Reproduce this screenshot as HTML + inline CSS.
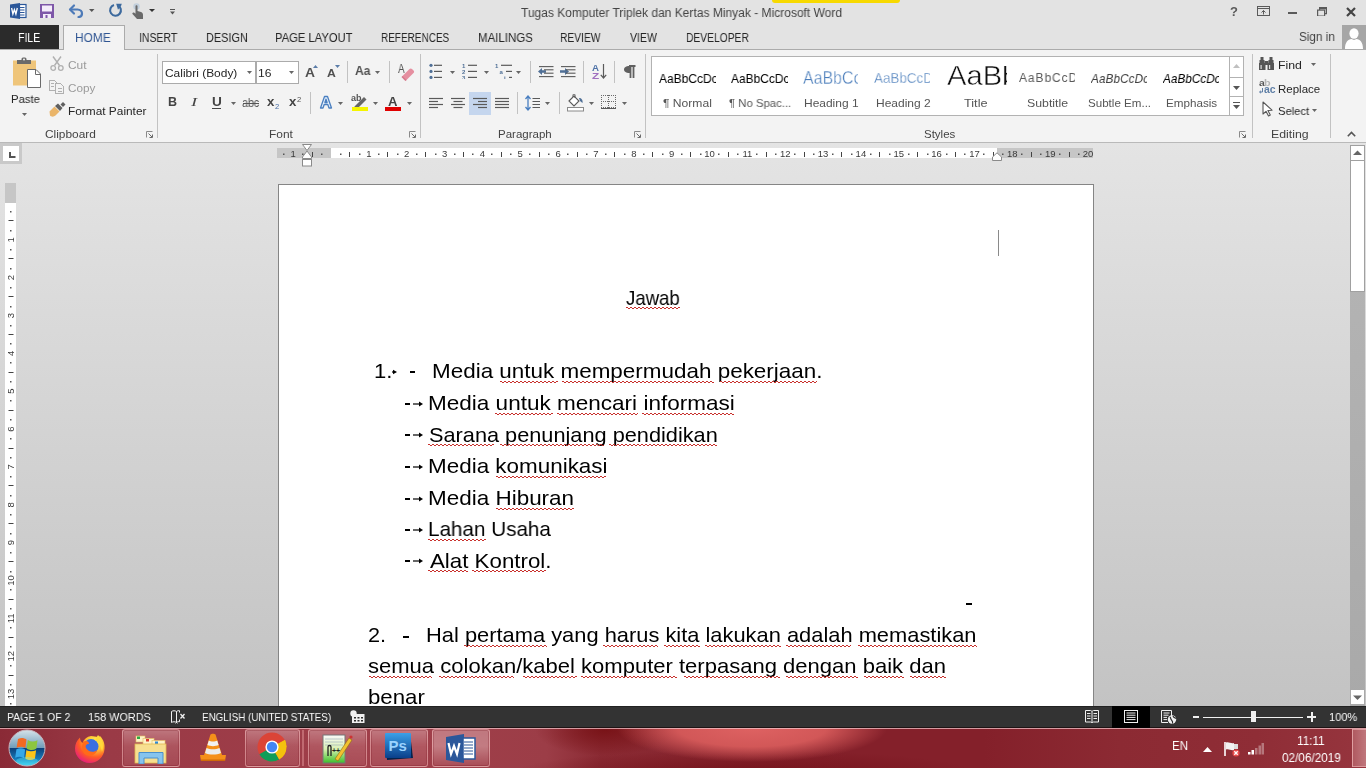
<!DOCTYPE html><html><head><meta charset="utf-8"><style>
*{margin:0;padding:0;box-sizing:border-box}
html,body{width:1366px;height:768px;overflow:hidden;position:relative;background:#e3e3e3;font-family:"Liberation Sans",sans-serif}
.t{position:absolute;white-space:pre;line-height:1em;transform-origin:0 0;will-change:transform}
.r{position:absolute;display:block}
</style></head><body><div class="r" style="left:0px;top:143px;width:1366px;height:563px;background:linear-gradient(#e4e4e4, #c3c3c3);"></div>
<div class="r" style="left:278px;top:184px;width:816px;height:530px;background:#fff;border:1px solid #858585;border-bottom:none"></div>
<div class="r" style="left:998px;top:230px;width:1px;height:26px;background:#8a8a8a;"></div>
<div id="t1" class="t" style="left:625.81px;top:286.82px;font-size:21.00px;color:#000;font-family:'Liberation Sans', sans-serif;font-weight:normal;font-style:normal;transform:scaleX(0.8858);">Jawab</div>
<svg class="r" style="left:626px;top:307px;shape-rendering:crispEdges" width="54" height="2" viewBox="0 0 54 2"><g fill="#c8302c"><rect x="0" y="0" width="2" height="1"/><rect x="2" y="1" width="2" height="1"/><rect x="4" y="0" width="2" height="1"/><rect x="6" y="1" width="2" height="1"/><rect x="8" y="0" width="2" height="1"/><rect x="10" y="1" width="2" height="1"/><rect x="12" y="0" width="2" height="1"/><rect x="14" y="1" width="2" height="1"/><rect x="16" y="0" width="2" height="1"/><rect x="18" y="1" width="2" height="1"/><rect x="20" y="0" width="2" height="1"/><rect x="22" y="1" width="2" height="1"/><rect x="24" y="0" width="2" height="1"/><rect x="26" y="1" width="2" height="1"/><rect x="28" y="0" width="2" height="1"/><rect x="30" y="1" width="2" height="1"/><rect x="32" y="0" width="2" height="1"/><rect x="34" y="1" width="2" height="1"/><rect x="36" y="0" width="2" height="1"/><rect x="38" y="1" width="2" height="1"/><rect x="40" y="0" width="2" height="1"/><rect x="42" y="1" width="2" height="1"/><rect x="44" y="0" width="2" height="1"/><rect x="46" y="1" width="2" height="1"/><rect x="48" y="0" width="2" height="1"/><rect x="50" y="1" width="2" height="1"/><rect x="52" y="0" width="2" height="1"/></g></svg>
<div id="t2" class="t" style="left:374.12px;top:360.02px;font-size:21.00px;color:#000;font-family:'Liberation Sans', sans-serif;font-weight:normal;font-style:normal;transform:scaleX(1.0501);">1.</div>
<svg class="r" style="left:392px;top:369px;" width="7" height="6" viewBox="0 0 7 6"><path d="M0 3 H3.0" stroke="#000" stroke-width="1.2"/><path d="M1.0 0.8 L5.0 3 L1.0 5.2 Z" fill="#000"/></svg>
<div class="r" style="left:409.8px;top:371px;width:5.2px;height:2px;background:#000;"></div>
<div id="t3" class="t" style="left:432.26px;top:360.02px;font-size:21.00px;color:#000;font-family:'Liberation Sans', sans-serif;font-weight:normal;font-style:normal;transform:scaleX(1.0687);">Media untuk mempermudah pekerjaan.</div>
<svg class="r" style="left:500px;top:381px;shape-rendering:crispEdges" width="58" height="2" viewBox="0 0 58 2"><g fill="#c8302c"><rect x="0" y="0" width="2" height="1"/><rect x="2" y="1" width="2" height="1"/><rect x="4" y="0" width="2" height="1"/><rect x="6" y="1" width="2" height="1"/><rect x="8" y="0" width="2" height="1"/><rect x="10" y="1" width="2" height="1"/><rect x="12" y="0" width="2" height="1"/><rect x="14" y="1" width="2" height="1"/><rect x="16" y="0" width="2" height="1"/><rect x="18" y="1" width="2" height="1"/><rect x="20" y="0" width="2" height="1"/><rect x="22" y="1" width="2" height="1"/><rect x="24" y="0" width="2" height="1"/><rect x="26" y="1" width="2" height="1"/><rect x="28" y="0" width="2" height="1"/><rect x="30" y="1" width="2" height="1"/><rect x="32" y="0" width="2" height="1"/><rect x="34" y="1" width="2" height="1"/><rect x="36" y="0" width="2" height="1"/><rect x="38" y="1" width="2" height="1"/><rect x="40" y="0" width="2" height="1"/><rect x="42" y="1" width="2" height="1"/><rect x="44" y="0" width="2" height="1"/><rect x="46" y="1" width="2" height="1"/><rect x="48" y="0" width="2" height="1"/><rect x="50" y="1" width="2" height="1"/><rect x="52" y="0" width="2" height="1"/><rect x="54" y="1" width="2" height="1"/><rect x="56" y="0" width="2" height="1"/></g></svg>
<svg class="r" style="left:562px;top:381px;shape-rendering:crispEdges" width="152" height="2" viewBox="0 0 152 2"><g fill="#c8302c"><rect x="0" y="0" width="2" height="1"/><rect x="2" y="1" width="2" height="1"/><rect x="4" y="0" width="2" height="1"/><rect x="6" y="1" width="2" height="1"/><rect x="8" y="0" width="2" height="1"/><rect x="10" y="1" width="2" height="1"/><rect x="12" y="0" width="2" height="1"/><rect x="14" y="1" width="2" height="1"/><rect x="16" y="0" width="2" height="1"/><rect x="18" y="1" width="2" height="1"/><rect x="20" y="0" width="2" height="1"/><rect x="22" y="1" width="2" height="1"/><rect x="24" y="0" width="2" height="1"/><rect x="26" y="1" width="2" height="1"/><rect x="28" y="0" width="2" height="1"/><rect x="30" y="1" width="2" height="1"/><rect x="32" y="0" width="2" height="1"/><rect x="34" y="1" width="2" height="1"/><rect x="36" y="0" width="2" height="1"/><rect x="38" y="1" width="2" height="1"/><rect x="40" y="0" width="2" height="1"/><rect x="42" y="1" width="2" height="1"/><rect x="44" y="0" width="2" height="1"/><rect x="46" y="1" width="2" height="1"/><rect x="48" y="0" width="2" height="1"/><rect x="50" y="1" width="2" height="1"/><rect x="52" y="0" width="2" height="1"/><rect x="54" y="1" width="2" height="1"/><rect x="56" y="0" width="2" height="1"/><rect x="58" y="1" width="2" height="1"/><rect x="60" y="0" width="2" height="1"/><rect x="62" y="1" width="2" height="1"/><rect x="64" y="0" width="2" height="1"/><rect x="66" y="1" width="2" height="1"/><rect x="68" y="0" width="2" height="1"/><rect x="70" y="1" width="2" height="1"/><rect x="72" y="0" width="2" height="1"/><rect x="74" y="1" width="2" height="1"/><rect x="76" y="0" width="2" height="1"/><rect x="78" y="1" width="2" height="1"/><rect x="80" y="0" width="2" height="1"/><rect x="82" y="1" width="2" height="1"/><rect x="84" y="0" width="2" height="1"/><rect x="86" y="1" width="2" height="1"/><rect x="88" y="0" width="2" height="1"/><rect x="90" y="1" width="2" height="1"/><rect x="92" y="0" width="2" height="1"/><rect x="94" y="1" width="2" height="1"/><rect x="96" y="0" width="2" height="1"/><rect x="98" y="1" width="2" height="1"/><rect x="100" y="0" width="2" height="1"/><rect x="102" y="1" width="2" height="1"/><rect x="104" y="0" width="2" height="1"/><rect x="106" y="1" width="2" height="1"/><rect x="108" y="0" width="2" height="1"/><rect x="110" y="1" width="2" height="1"/><rect x="112" y="0" width="2" height="1"/><rect x="114" y="1" width="2" height="1"/><rect x="116" y="0" width="2" height="1"/><rect x="118" y="1" width="2" height="1"/><rect x="120" y="0" width="2" height="1"/><rect x="122" y="1" width="2" height="1"/><rect x="124" y="0" width="2" height="1"/><rect x="126" y="1" width="2" height="1"/><rect x="128" y="0" width="2" height="1"/><rect x="130" y="1" width="2" height="1"/><rect x="132" y="0" width="2" height="1"/><rect x="134" y="1" width="2" height="1"/><rect x="136" y="0" width="2" height="1"/><rect x="138" y="1" width="2" height="1"/><rect x="140" y="0" width="2" height="1"/><rect x="142" y="1" width="2" height="1"/><rect x="144" y="0" width="2" height="1"/><rect x="146" y="1" width="2" height="1"/><rect x="148" y="0" width="2" height="1"/><rect x="150" y="1" width="2" height="1"/></g></svg>
<svg class="r" style="left:720px;top:381px;shape-rendering:crispEdges" width="97" height="2" viewBox="0 0 97 2"><g fill="#c8302c"><rect x="0" y="0" width="2" height="1"/><rect x="2" y="1" width="2" height="1"/><rect x="4" y="0" width="2" height="1"/><rect x="6" y="1" width="2" height="1"/><rect x="8" y="0" width="2" height="1"/><rect x="10" y="1" width="2" height="1"/><rect x="12" y="0" width="2" height="1"/><rect x="14" y="1" width="2" height="1"/><rect x="16" y="0" width="2" height="1"/><rect x="18" y="1" width="2" height="1"/><rect x="20" y="0" width="2" height="1"/><rect x="22" y="1" width="2" height="1"/><rect x="24" y="0" width="2" height="1"/><rect x="26" y="1" width="2" height="1"/><rect x="28" y="0" width="2" height="1"/><rect x="30" y="1" width="2" height="1"/><rect x="32" y="0" width="2" height="1"/><rect x="34" y="1" width="2" height="1"/><rect x="36" y="0" width="2" height="1"/><rect x="38" y="1" width="2" height="1"/><rect x="40" y="0" width="2" height="1"/><rect x="42" y="1" width="2" height="1"/><rect x="44" y="0" width="2" height="1"/><rect x="46" y="1" width="2" height="1"/><rect x="48" y="0" width="2" height="1"/><rect x="50" y="1" width="2" height="1"/><rect x="52" y="0" width="2" height="1"/><rect x="54" y="1" width="2" height="1"/><rect x="56" y="0" width="2" height="1"/><rect x="58" y="1" width="2" height="1"/><rect x="60" y="0" width="2" height="1"/><rect x="62" y="1" width="2" height="1"/><rect x="64" y="0" width="2" height="1"/><rect x="66" y="1" width="2" height="1"/><rect x="68" y="0" width="2" height="1"/><rect x="70" y="1" width="2" height="1"/><rect x="72" y="0" width="2" height="1"/><rect x="74" y="1" width="2" height="1"/><rect x="76" y="0" width="2" height="1"/><rect x="78" y="1" width="2" height="1"/><rect x="80" y="0" width="2" height="1"/><rect x="82" y="1" width="2" height="1"/><rect x="84" y="0" width="2" height="1"/><rect x="86" y="1" width="2" height="1"/><rect x="88" y="0" width="2" height="1"/><rect x="90" y="1" width="2" height="1"/><rect x="92" y="0" width="2" height="1"/><rect x="94" y="1" width="2" height="1"/><rect x="96" y="0" width="2" height="1"/></g></svg>
<div class="r" style="left:404.7px;top:402.8px;width:5.8px;height:2px;background:#000;"></div>
<svg class="r" style="left:413px;top:400.8px;" width="12" height="6" viewBox="0 0 12 6"><path d="M0 3 H8.0" stroke="#000" stroke-width="1.2"/><path d="M6.0 0.4 L10.0 3 L6.0 5.6 Z" fill="#000"/></svg>
<div id="t4" class="t" style="left:427.95px;top:392.02px;font-size:21.00px;color:#000;font-family:'Liberation Sans', sans-serif;font-weight:normal;font-style:normal;transform:scaleX(1.0728);">Media untuk mencari informasi</div>
<svg class="r" style="left:495px;top:413px;shape-rendering:crispEdges" width="58" height="2" viewBox="0 0 58 2"><g fill="#c8302c"><rect x="0" y="0" width="2" height="1"/><rect x="2" y="1" width="2" height="1"/><rect x="4" y="0" width="2" height="1"/><rect x="6" y="1" width="2" height="1"/><rect x="8" y="0" width="2" height="1"/><rect x="10" y="1" width="2" height="1"/><rect x="12" y="0" width="2" height="1"/><rect x="14" y="1" width="2" height="1"/><rect x="16" y="0" width="2" height="1"/><rect x="18" y="1" width="2" height="1"/><rect x="20" y="0" width="2" height="1"/><rect x="22" y="1" width="2" height="1"/><rect x="24" y="0" width="2" height="1"/><rect x="26" y="1" width="2" height="1"/><rect x="28" y="0" width="2" height="1"/><rect x="30" y="1" width="2" height="1"/><rect x="32" y="0" width="2" height="1"/><rect x="34" y="1" width="2" height="1"/><rect x="36" y="0" width="2" height="1"/><rect x="38" y="1" width="2" height="1"/><rect x="40" y="0" width="2" height="1"/><rect x="42" y="1" width="2" height="1"/><rect x="44" y="0" width="2" height="1"/><rect x="46" y="1" width="2" height="1"/><rect x="48" y="0" width="2" height="1"/><rect x="50" y="1" width="2" height="1"/><rect x="52" y="0" width="2" height="1"/><rect x="54" y="1" width="2" height="1"/><rect x="56" y="0" width="2" height="1"/></g></svg>
<svg class="r" style="left:557px;top:413px;shape-rendering:crispEdges" width="81" height="2" viewBox="0 0 81 2"><g fill="#c8302c"><rect x="0" y="0" width="2" height="1"/><rect x="2" y="1" width="2" height="1"/><rect x="4" y="0" width="2" height="1"/><rect x="6" y="1" width="2" height="1"/><rect x="8" y="0" width="2" height="1"/><rect x="10" y="1" width="2" height="1"/><rect x="12" y="0" width="2" height="1"/><rect x="14" y="1" width="2" height="1"/><rect x="16" y="0" width="2" height="1"/><rect x="18" y="1" width="2" height="1"/><rect x="20" y="0" width="2" height="1"/><rect x="22" y="1" width="2" height="1"/><rect x="24" y="0" width="2" height="1"/><rect x="26" y="1" width="2" height="1"/><rect x="28" y="0" width="2" height="1"/><rect x="30" y="1" width="2" height="1"/><rect x="32" y="0" width="2" height="1"/><rect x="34" y="1" width="2" height="1"/><rect x="36" y="0" width="2" height="1"/><rect x="38" y="1" width="2" height="1"/><rect x="40" y="0" width="2" height="1"/><rect x="42" y="1" width="2" height="1"/><rect x="44" y="0" width="2" height="1"/><rect x="46" y="1" width="2" height="1"/><rect x="48" y="0" width="2" height="1"/><rect x="50" y="1" width="2" height="1"/><rect x="52" y="0" width="2" height="1"/><rect x="54" y="1" width="2" height="1"/><rect x="56" y="0" width="2" height="1"/><rect x="58" y="1" width="2" height="1"/><rect x="60" y="0" width="2" height="1"/><rect x="62" y="1" width="2" height="1"/><rect x="64" y="0" width="2" height="1"/><rect x="66" y="1" width="2" height="1"/><rect x="68" y="0" width="2" height="1"/><rect x="70" y="1" width="2" height="1"/><rect x="72" y="0" width="2" height="1"/><rect x="74" y="1" width="2" height="1"/><rect x="76" y="0" width="2" height="1"/><rect x="78" y="1" width="2" height="1"/><rect x="80" y="0" width="2" height="1"/></g></svg>
<svg class="r" style="left:642px;top:413px;shape-rendering:crispEdges" width="92" height="2" viewBox="0 0 92 2"><g fill="#c8302c"><rect x="0" y="0" width="2" height="1"/><rect x="2" y="1" width="2" height="1"/><rect x="4" y="0" width="2" height="1"/><rect x="6" y="1" width="2" height="1"/><rect x="8" y="0" width="2" height="1"/><rect x="10" y="1" width="2" height="1"/><rect x="12" y="0" width="2" height="1"/><rect x="14" y="1" width="2" height="1"/><rect x="16" y="0" width="2" height="1"/><rect x="18" y="1" width="2" height="1"/><rect x="20" y="0" width="2" height="1"/><rect x="22" y="1" width="2" height="1"/><rect x="24" y="0" width="2" height="1"/><rect x="26" y="1" width="2" height="1"/><rect x="28" y="0" width="2" height="1"/><rect x="30" y="1" width="2" height="1"/><rect x="32" y="0" width="2" height="1"/><rect x="34" y="1" width="2" height="1"/><rect x="36" y="0" width="2" height="1"/><rect x="38" y="1" width="2" height="1"/><rect x="40" y="0" width="2" height="1"/><rect x="42" y="1" width="2" height="1"/><rect x="44" y="0" width="2" height="1"/><rect x="46" y="1" width="2" height="1"/><rect x="48" y="0" width="2" height="1"/><rect x="50" y="1" width="2" height="1"/><rect x="52" y="0" width="2" height="1"/><rect x="54" y="1" width="2" height="1"/><rect x="56" y="0" width="2" height="1"/><rect x="58" y="1" width="2" height="1"/><rect x="60" y="0" width="2" height="1"/><rect x="62" y="1" width="2" height="1"/><rect x="64" y="0" width="2" height="1"/><rect x="66" y="1" width="2" height="1"/><rect x="68" y="0" width="2" height="1"/><rect x="70" y="1" width="2" height="1"/><rect x="72" y="0" width="2" height="1"/><rect x="74" y="1" width="2" height="1"/><rect x="76" y="0" width="2" height="1"/><rect x="78" y="1" width="2" height="1"/><rect x="80" y="0" width="2" height="1"/><rect x="82" y="1" width="2" height="1"/><rect x="84" y="0" width="2" height="1"/><rect x="86" y="1" width="2" height="1"/><rect x="88" y="0" width="2" height="1"/><rect x="90" y="1" width="2" height="1"/></g></svg>
<div class="r" style="left:404.7px;top:434.4px;width:5.8px;height:2px;background:#000;"></div>
<svg class="r" style="left:413px;top:432.4px;" width="12" height="6" viewBox="0 0 12 6"><path d="M0 3 H8.0" stroke="#000" stroke-width="1.2"/><path d="M6.0 0.4 L10.0 3 L6.0 5.6 Z" fill="#000"/></svg>
<div id="t5" class="t" style="left:428.81px;top:423.62px;font-size:21.00px;color:#000;font-family:'Liberation Sans', sans-serif;font-weight:normal;font-style:normal;transform:scaleX(1.0348);">Sarana penunjang pendidikan</div>
<svg class="r" style="left:428px;top:444px;shape-rendering:crispEdges" width="66" height="2" viewBox="0 0 66 2"><g fill="#c8302c"><rect x="0" y="0" width="2" height="1"/><rect x="2" y="1" width="2" height="1"/><rect x="4" y="0" width="2" height="1"/><rect x="6" y="1" width="2" height="1"/><rect x="8" y="0" width="2" height="1"/><rect x="10" y="1" width="2" height="1"/><rect x="12" y="0" width="2" height="1"/><rect x="14" y="1" width="2" height="1"/><rect x="16" y="0" width="2" height="1"/><rect x="18" y="1" width="2" height="1"/><rect x="20" y="0" width="2" height="1"/><rect x="22" y="1" width="2" height="1"/><rect x="24" y="0" width="2" height="1"/><rect x="26" y="1" width="2" height="1"/><rect x="28" y="0" width="2" height="1"/><rect x="30" y="1" width="2" height="1"/><rect x="32" y="0" width="2" height="1"/><rect x="34" y="1" width="2" height="1"/><rect x="36" y="0" width="2" height="1"/><rect x="38" y="1" width="2" height="1"/><rect x="40" y="0" width="2" height="1"/><rect x="42" y="1" width="2" height="1"/><rect x="44" y="0" width="2" height="1"/><rect x="46" y="1" width="2" height="1"/><rect x="48" y="0" width="2" height="1"/><rect x="50" y="1" width="2" height="1"/><rect x="52" y="0" width="2" height="1"/><rect x="54" y="1" width="2" height="1"/><rect x="56" y="0" width="2" height="1"/><rect x="58" y="1" width="2" height="1"/><rect x="60" y="0" width="2" height="1"/><rect x="62" y="1" width="2" height="1"/><rect x="64" y="0" width="2" height="1"/></g></svg>
<svg class="r" style="left:500px;top:444px;shape-rendering:crispEdges" width="104" height="2" viewBox="0 0 104 2"><g fill="#c8302c"><rect x="0" y="0" width="2" height="1"/><rect x="2" y="1" width="2" height="1"/><rect x="4" y="0" width="2" height="1"/><rect x="6" y="1" width="2" height="1"/><rect x="8" y="0" width="2" height="1"/><rect x="10" y="1" width="2" height="1"/><rect x="12" y="0" width="2" height="1"/><rect x="14" y="1" width="2" height="1"/><rect x="16" y="0" width="2" height="1"/><rect x="18" y="1" width="2" height="1"/><rect x="20" y="0" width="2" height="1"/><rect x="22" y="1" width="2" height="1"/><rect x="24" y="0" width="2" height="1"/><rect x="26" y="1" width="2" height="1"/><rect x="28" y="0" width="2" height="1"/><rect x="30" y="1" width="2" height="1"/><rect x="32" y="0" width="2" height="1"/><rect x="34" y="1" width="2" height="1"/><rect x="36" y="0" width="2" height="1"/><rect x="38" y="1" width="2" height="1"/><rect x="40" y="0" width="2" height="1"/><rect x="42" y="1" width="2" height="1"/><rect x="44" y="0" width="2" height="1"/><rect x="46" y="1" width="2" height="1"/><rect x="48" y="0" width="2" height="1"/><rect x="50" y="1" width="2" height="1"/><rect x="52" y="0" width="2" height="1"/><rect x="54" y="1" width="2" height="1"/><rect x="56" y="0" width="2" height="1"/><rect x="58" y="1" width="2" height="1"/><rect x="60" y="0" width="2" height="1"/><rect x="62" y="1" width="2" height="1"/><rect x="64" y="0" width="2" height="1"/><rect x="66" y="1" width="2" height="1"/><rect x="68" y="0" width="2" height="1"/><rect x="70" y="1" width="2" height="1"/><rect x="72" y="0" width="2" height="1"/><rect x="74" y="1" width="2" height="1"/><rect x="76" y="0" width="2" height="1"/><rect x="78" y="1" width="2" height="1"/><rect x="80" y="0" width="2" height="1"/><rect x="82" y="1" width="2" height="1"/><rect x="84" y="0" width="2" height="1"/><rect x="86" y="1" width="2" height="1"/><rect x="88" y="0" width="2" height="1"/><rect x="90" y="1" width="2" height="1"/><rect x="92" y="0" width="2" height="1"/><rect x="94" y="1" width="2" height="1"/><rect x="96" y="0" width="2" height="1"/><rect x="98" y="1" width="2" height="1"/><rect x="100" y="0" width="2" height="1"/><rect x="102" y="1" width="2" height="1"/></g></svg>
<svg class="r" style="left:609px;top:444px;shape-rendering:crispEdges" width="108" height="2" viewBox="0 0 108 2"><g fill="#c8302c"><rect x="0" y="0" width="2" height="1"/><rect x="2" y="1" width="2" height="1"/><rect x="4" y="0" width="2" height="1"/><rect x="6" y="1" width="2" height="1"/><rect x="8" y="0" width="2" height="1"/><rect x="10" y="1" width="2" height="1"/><rect x="12" y="0" width="2" height="1"/><rect x="14" y="1" width="2" height="1"/><rect x="16" y="0" width="2" height="1"/><rect x="18" y="1" width="2" height="1"/><rect x="20" y="0" width="2" height="1"/><rect x="22" y="1" width="2" height="1"/><rect x="24" y="0" width="2" height="1"/><rect x="26" y="1" width="2" height="1"/><rect x="28" y="0" width="2" height="1"/><rect x="30" y="1" width="2" height="1"/><rect x="32" y="0" width="2" height="1"/><rect x="34" y="1" width="2" height="1"/><rect x="36" y="0" width="2" height="1"/><rect x="38" y="1" width="2" height="1"/><rect x="40" y="0" width="2" height="1"/><rect x="42" y="1" width="2" height="1"/><rect x="44" y="0" width="2" height="1"/><rect x="46" y="1" width="2" height="1"/><rect x="48" y="0" width="2" height="1"/><rect x="50" y="1" width="2" height="1"/><rect x="52" y="0" width="2" height="1"/><rect x="54" y="1" width="2" height="1"/><rect x="56" y="0" width="2" height="1"/><rect x="58" y="1" width="2" height="1"/><rect x="60" y="0" width="2" height="1"/><rect x="62" y="1" width="2" height="1"/><rect x="64" y="0" width="2" height="1"/><rect x="66" y="1" width="2" height="1"/><rect x="68" y="0" width="2" height="1"/><rect x="70" y="1" width="2" height="1"/><rect x="72" y="0" width="2" height="1"/><rect x="74" y="1" width="2" height="1"/><rect x="76" y="0" width="2" height="1"/><rect x="78" y="1" width="2" height="1"/><rect x="80" y="0" width="2" height="1"/><rect x="82" y="1" width="2" height="1"/><rect x="84" y="0" width="2" height="1"/><rect x="86" y="1" width="2" height="1"/><rect x="88" y="0" width="2" height="1"/><rect x="90" y="1" width="2" height="1"/><rect x="92" y="0" width="2" height="1"/><rect x="94" y="1" width="2" height="1"/><rect x="96" y="0" width="2" height="1"/><rect x="98" y="1" width="2" height="1"/><rect x="100" y="0" width="2" height="1"/><rect x="102" y="1" width="2" height="1"/><rect x="104" y="0" width="2" height="1"/><rect x="106" y="1" width="2" height="1"/></g></svg>
<div class="r" style="left:404.7px;top:466.0px;width:5.8px;height:2px;background:#000;"></div>
<svg class="r" style="left:413px;top:464.0px;" width="12" height="6" viewBox="0 0 12 6"><path d="M0 3 H8.0" stroke="#000" stroke-width="1.2"/><path d="M6.0 0.4 L10.0 3 L6.0 5.6 Z" fill="#000"/></svg>
<div id="t6" class="t" style="left:427.96px;top:455.22px;font-size:21.00px;color:#000;font-family:'Liberation Sans', sans-serif;font-weight:normal;font-style:normal;transform:scaleX(1.0683);">Media komunikasi</div>
<svg class="r" style="left:496px;top:476px;shape-rendering:crispEdges" width="110" height="2" viewBox="0 0 110 2"><g fill="#c8302c"><rect x="0" y="0" width="2" height="1"/><rect x="2" y="1" width="2" height="1"/><rect x="4" y="0" width="2" height="1"/><rect x="6" y="1" width="2" height="1"/><rect x="8" y="0" width="2" height="1"/><rect x="10" y="1" width="2" height="1"/><rect x="12" y="0" width="2" height="1"/><rect x="14" y="1" width="2" height="1"/><rect x="16" y="0" width="2" height="1"/><rect x="18" y="1" width="2" height="1"/><rect x="20" y="0" width="2" height="1"/><rect x="22" y="1" width="2" height="1"/><rect x="24" y="0" width="2" height="1"/><rect x="26" y="1" width="2" height="1"/><rect x="28" y="0" width="2" height="1"/><rect x="30" y="1" width="2" height="1"/><rect x="32" y="0" width="2" height="1"/><rect x="34" y="1" width="2" height="1"/><rect x="36" y="0" width="2" height="1"/><rect x="38" y="1" width="2" height="1"/><rect x="40" y="0" width="2" height="1"/><rect x="42" y="1" width="2" height="1"/><rect x="44" y="0" width="2" height="1"/><rect x="46" y="1" width="2" height="1"/><rect x="48" y="0" width="2" height="1"/><rect x="50" y="1" width="2" height="1"/><rect x="52" y="0" width="2" height="1"/><rect x="54" y="1" width="2" height="1"/><rect x="56" y="0" width="2" height="1"/><rect x="58" y="1" width="2" height="1"/><rect x="60" y="0" width="2" height="1"/><rect x="62" y="1" width="2" height="1"/><rect x="64" y="0" width="2" height="1"/><rect x="66" y="1" width="2" height="1"/><rect x="68" y="0" width="2" height="1"/><rect x="70" y="1" width="2" height="1"/><rect x="72" y="0" width="2" height="1"/><rect x="74" y="1" width="2" height="1"/><rect x="76" y="0" width="2" height="1"/><rect x="78" y="1" width="2" height="1"/><rect x="80" y="0" width="2" height="1"/><rect x="82" y="1" width="2" height="1"/><rect x="84" y="0" width="2" height="1"/><rect x="86" y="1" width="2" height="1"/><rect x="88" y="0" width="2" height="1"/><rect x="90" y="1" width="2" height="1"/><rect x="92" y="0" width="2" height="1"/><rect x="94" y="1" width="2" height="1"/><rect x="96" y="0" width="2" height="1"/><rect x="98" y="1" width="2" height="1"/><rect x="100" y="0" width="2" height="1"/><rect x="102" y="1" width="2" height="1"/><rect x="104" y="0" width="2" height="1"/><rect x="106" y="1" width="2" height="1"/><rect x="108" y="0" width="2" height="1"/></g></svg>
<div class="r" style="left:404.7px;top:497.8px;width:5.8px;height:2px;background:#000;"></div>
<svg class="r" style="left:413px;top:495.8px;" width="12" height="6" viewBox="0 0 12 6"><path d="M0 3 H8.0" stroke="#000" stroke-width="1.2"/><path d="M6.0 0.4 L10.0 3 L6.0 5.6 Z" fill="#000"/></svg>
<div id="t7" class="t" style="left:427.96px;top:487.02px;font-size:21.00px;color:#000;font-family:'Liberation Sans', sans-serif;font-weight:normal;font-style:normal;transform:scaleX(1.0697);">Media Hiburan</div>
<svg class="r" style="left:496px;top:508px;shape-rendering:crispEdges" width="78" height="2" viewBox="0 0 78 2"><g fill="#c8302c"><rect x="0" y="0" width="2" height="1"/><rect x="2" y="1" width="2" height="1"/><rect x="4" y="0" width="2" height="1"/><rect x="6" y="1" width="2" height="1"/><rect x="8" y="0" width="2" height="1"/><rect x="10" y="1" width="2" height="1"/><rect x="12" y="0" width="2" height="1"/><rect x="14" y="1" width="2" height="1"/><rect x="16" y="0" width="2" height="1"/><rect x="18" y="1" width="2" height="1"/><rect x="20" y="0" width="2" height="1"/><rect x="22" y="1" width="2" height="1"/><rect x="24" y="0" width="2" height="1"/><rect x="26" y="1" width="2" height="1"/><rect x="28" y="0" width="2" height="1"/><rect x="30" y="1" width="2" height="1"/><rect x="32" y="0" width="2" height="1"/><rect x="34" y="1" width="2" height="1"/><rect x="36" y="0" width="2" height="1"/><rect x="38" y="1" width="2" height="1"/><rect x="40" y="0" width="2" height="1"/><rect x="42" y="1" width="2" height="1"/><rect x="44" y="0" width="2" height="1"/><rect x="46" y="1" width="2" height="1"/><rect x="48" y="0" width="2" height="1"/><rect x="50" y="1" width="2" height="1"/><rect x="52" y="0" width="2" height="1"/><rect x="54" y="1" width="2" height="1"/><rect x="56" y="0" width="2" height="1"/><rect x="58" y="1" width="2" height="1"/><rect x="60" y="0" width="2" height="1"/><rect x="62" y="1" width="2" height="1"/><rect x="64" y="0" width="2" height="1"/><rect x="66" y="1" width="2" height="1"/><rect x="68" y="0" width="2" height="1"/><rect x="70" y="1" width="2" height="1"/><rect x="72" y="0" width="2" height="1"/><rect x="74" y="1" width="2" height="1"/><rect x="76" y="0" width="2" height="1"/></g></svg>
<div class="r" style="left:404.7px;top:529.0px;width:5.8px;height:2px;background:#000;"></div>
<svg class="r" style="left:413px;top:527.0px;" width="12" height="6" viewBox="0 0 12 6"><path d="M0 3 H8.0" stroke="#000" stroke-width="1.2"/><path d="M6.0 0.4 L10.0 3 L6.0 5.6 Z" fill="#000"/></svg>
<div id="t8" class="t" style="left:428.11px;top:518.22px;font-size:21.00px;color:#000;font-family:'Liberation Sans', sans-serif;font-weight:normal;font-style:normal;transform:scaleX(0.9836);">Lahan Usaha</div>
<svg class="r" style="left:428px;top:539px;shape-rendering:crispEdges" width="58" height="2" viewBox="0 0 58 2"><g fill="#c8302c"><rect x="0" y="0" width="2" height="1"/><rect x="2" y="1" width="2" height="1"/><rect x="4" y="0" width="2" height="1"/><rect x="6" y="1" width="2" height="1"/><rect x="8" y="0" width="2" height="1"/><rect x="10" y="1" width="2" height="1"/><rect x="12" y="0" width="2" height="1"/><rect x="14" y="1" width="2" height="1"/><rect x="16" y="0" width="2" height="1"/><rect x="18" y="1" width="2" height="1"/><rect x="20" y="0" width="2" height="1"/><rect x="22" y="1" width="2" height="1"/><rect x="24" y="0" width="2" height="1"/><rect x="26" y="1" width="2" height="1"/><rect x="28" y="0" width="2" height="1"/><rect x="30" y="1" width="2" height="1"/><rect x="32" y="0" width="2" height="1"/><rect x="34" y="1" width="2" height="1"/><rect x="36" y="0" width="2" height="1"/><rect x="38" y="1" width="2" height="1"/><rect x="40" y="0" width="2" height="1"/><rect x="42" y="1" width="2" height="1"/><rect x="44" y="0" width="2" height="1"/><rect x="46" y="1" width="2" height="1"/><rect x="48" y="0" width="2" height="1"/><rect x="50" y="1" width="2" height="1"/><rect x="52" y="0" width="2" height="1"/><rect x="54" y="1" width="2" height="1"/><rect x="56" y="0" width="2" height="1"/></g></svg>
<div class="r" style="left:404.7px;top:560.3px;width:5.8px;height:2px;background:#000;"></div>
<svg class="r" style="left:413px;top:558.3px;" width="12" height="6" viewBox="0 0 12 6"><path d="M0 3 H8.0" stroke="#000" stroke-width="1.2"/><path d="M6.0 0.4 L10.0 3 L6.0 5.6 Z" fill="#000"/></svg>
<div id="t9" class="t" style="left:429.76px;top:549.52px;font-size:21.00px;color:#000;font-family:'Liberation Sans', sans-serif;font-weight:normal;font-style:normal;transform:scaleX(1.0618);">Alat Kontrol.</div>
<svg class="r" style="left:428px;top:570px;shape-rendering:crispEdges" width="40" height="2" viewBox="0 0 40 2"><g fill="#c8302c"><rect x="0" y="0" width="2" height="1"/><rect x="2" y="1" width="2" height="1"/><rect x="4" y="0" width="2" height="1"/><rect x="6" y="1" width="2" height="1"/><rect x="8" y="0" width="2" height="1"/><rect x="10" y="1" width="2" height="1"/><rect x="12" y="0" width="2" height="1"/><rect x="14" y="1" width="2" height="1"/><rect x="16" y="0" width="2" height="1"/><rect x="18" y="1" width="2" height="1"/><rect x="20" y="0" width="2" height="1"/><rect x="22" y="1" width="2" height="1"/><rect x="24" y="0" width="2" height="1"/><rect x="26" y="1" width="2" height="1"/><rect x="28" y="0" width="2" height="1"/><rect x="30" y="1" width="2" height="1"/><rect x="32" y="0" width="2" height="1"/><rect x="34" y="1" width="2" height="1"/><rect x="36" y="0" width="2" height="1"/><rect x="38" y="1" width="2" height="1"/></g></svg>
<svg class="r" style="left:472px;top:570px;shape-rendering:crispEdges" width="74" height="2" viewBox="0 0 74 2"><g fill="#c8302c"><rect x="0" y="0" width="2" height="1"/><rect x="2" y="1" width="2" height="1"/><rect x="4" y="0" width="2" height="1"/><rect x="6" y="1" width="2" height="1"/><rect x="8" y="0" width="2" height="1"/><rect x="10" y="1" width="2" height="1"/><rect x="12" y="0" width="2" height="1"/><rect x="14" y="1" width="2" height="1"/><rect x="16" y="0" width="2" height="1"/><rect x="18" y="1" width="2" height="1"/><rect x="20" y="0" width="2" height="1"/><rect x="22" y="1" width="2" height="1"/><rect x="24" y="0" width="2" height="1"/><rect x="26" y="1" width="2" height="1"/><rect x="28" y="0" width="2" height="1"/><rect x="30" y="1" width="2" height="1"/><rect x="32" y="0" width="2" height="1"/><rect x="34" y="1" width="2" height="1"/><rect x="36" y="0" width="2" height="1"/><rect x="38" y="1" width="2" height="1"/><rect x="40" y="0" width="2" height="1"/><rect x="42" y="1" width="2" height="1"/><rect x="44" y="0" width="2" height="1"/><rect x="46" y="1" width="2" height="1"/><rect x="48" y="0" width="2" height="1"/><rect x="50" y="1" width="2" height="1"/><rect x="52" y="0" width="2" height="1"/><rect x="54" y="1" width="2" height="1"/><rect x="56" y="0" width="2" height="1"/><rect x="58" y="1" width="2" height="1"/><rect x="60" y="0" width="2" height="1"/><rect x="62" y="1" width="2" height="1"/><rect x="64" y="0" width="2" height="1"/><rect x="66" y="1" width="2" height="1"/><rect x="68" y="0" width="2" height="1"/><rect x="70" y="1" width="2" height="1"/><rect x="72" y="0" width="2" height="1"/></g></svg>
<div class="r" style="left:965.8px;top:602.5px;width:5.9px;height:2px;background:#000;"></div>
<div id="t10" class="t" style="left:367.91px;top:623.82px;font-size:21.00px;color:#000;font-family:'Liberation Sans', sans-serif;font-weight:normal;font-style:normal;transform:scaleX(1.0315);">2.</div>
<div class="r" style="left:403.1px;top:636px;width:5.9px;height:2px;background:#000;"></div>
<div id="t11" class="t" style="left:425.91px;top:623.82px;font-size:21.00px;color:#000;font-family:'Liberation Sans', sans-serif;font-weight:normal;font-style:normal;transform:scaleX(1.0411);">Hal pertama yang harus kita lakukan adalah memastikan</div>
<div id="t12" class="t" style="left:368.39px;top:654.62px;font-size:21.00px;color:#000;font-family:'Liberation Sans', sans-serif;font-weight:normal;font-style:normal;transform:scaleX(1.0488);">semua colokan/kabel komputer terpasang dengan baik dan</div>
<div id="t13" class="t" style="left:368.47px;top:685.82px;font-size:21.00px;color:#000;font-family:'Liberation Sans', sans-serif;font-weight:normal;font-style:normal;transform:scaleX(1.0574);">benar</div>
<svg class="r" style="left:464px;top:645px;shape-rendering:crispEdges" width="83" height="2" viewBox="0 0 83 2"><g fill="#c8302c"><rect x="0" y="0" width="2" height="1"/><rect x="2" y="1" width="2" height="1"/><rect x="4" y="0" width="2" height="1"/><rect x="6" y="1" width="2" height="1"/><rect x="8" y="0" width="2" height="1"/><rect x="10" y="1" width="2" height="1"/><rect x="12" y="0" width="2" height="1"/><rect x="14" y="1" width="2" height="1"/><rect x="16" y="0" width="2" height="1"/><rect x="18" y="1" width="2" height="1"/><rect x="20" y="0" width="2" height="1"/><rect x="22" y="1" width="2" height="1"/><rect x="24" y="0" width="2" height="1"/><rect x="26" y="1" width="2" height="1"/><rect x="28" y="0" width="2" height="1"/><rect x="30" y="1" width="2" height="1"/><rect x="32" y="0" width="2" height="1"/><rect x="34" y="1" width="2" height="1"/><rect x="36" y="0" width="2" height="1"/><rect x="38" y="1" width="2" height="1"/><rect x="40" y="0" width="2" height="1"/><rect x="42" y="1" width="2" height="1"/><rect x="44" y="0" width="2" height="1"/><rect x="46" y="1" width="2" height="1"/><rect x="48" y="0" width="2" height="1"/><rect x="50" y="1" width="2" height="1"/><rect x="52" y="0" width="2" height="1"/><rect x="54" y="1" width="2" height="1"/><rect x="56" y="0" width="2" height="1"/><rect x="58" y="1" width="2" height="1"/><rect x="60" y="0" width="2" height="1"/><rect x="62" y="1" width="2" height="1"/><rect x="64" y="0" width="2" height="1"/><rect x="66" y="1" width="2" height="1"/><rect x="68" y="0" width="2" height="1"/><rect x="70" y="1" width="2" height="1"/><rect x="72" y="0" width="2" height="1"/><rect x="74" y="1" width="2" height="1"/><rect x="76" y="0" width="2" height="1"/><rect x="78" y="1" width="2" height="1"/><rect x="80" y="0" width="2" height="1"/><rect x="82" y="1" width="2" height="1"/></g></svg>
<svg class="r" style="left:603px;top:645px;shape-rendering:crispEdges" width="55" height="2" viewBox="0 0 55 2"><g fill="#c8302c"><rect x="0" y="0" width="2" height="1"/><rect x="2" y="1" width="2" height="1"/><rect x="4" y="0" width="2" height="1"/><rect x="6" y="1" width="2" height="1"/><rect x="8" y="0" width="2" height="1"/><rect x="10" y="1" width="2" height="1"/><rect x="12" y="0" width="2" height="1"/><rect x="14" y="1" width="2" height="1"/><rect x="16" y="0" width="2" height="1"/><rect x="18" y="1" width="2" height="1"/><rect x="20" y="0" width="2" height="1"/><rect x="22" y="1" width="2" height="1"/><rect x="24" y="0" width="2" height="1"/><rect x="26" y="1" width="2" height="1"/><rect x="28" y="0" width="2" height="1"/><rect x="30" y="1" width="2" height="1"/><rect x="32" y="0" width="2" height="1"/><rect x="34" y="1" width="2" height="1"/><rect x="36" y="0" width="2" height="1"/><rect x="38" y="1" width="2" height="1"/><rect x="40" y="0" width="2" height="1"/><rect x="42" y="1" width="2" height="1"/><rect x="44" y="0" width="2" height="1"/><rect x="46" y="1" width="2" height="1"/><rect x="48" y="0" width="2" height="1"/><rect x="50" y="1" width="2" height="1"/><rect x="52" y="0" width="2" height="1"/><rect x="54" y="1" width="2" height="1"/></g></svg>
<svg class="r" style="left:664px;top:645px;shape-rendering:crispEdges" width="36" height="2" viewBox="0 0 36 2"><g fill="#c8302c"><rect x="0" y="0" width="2" height="1"/><rect x="2" y="1" width="2" height="1"/><rect x="4" y="0" width="2" height="1"/><rect x="6" y="1" width="2" height="1"/><rect x="8" y="0" width="2" height="1"/><rect x="10" y="1" width="2" height="1"/><rect x="12" y="0" width="2" height="1"/><rect x="14" y="1" width="2" height="1"/><rect x="16" y="0" width="2" height="1"/><rect x="18" y="1" width="2" height="1"/><rect x="20" y="0" width="2" height="1"/><rect x="22" y="1" width="2" height="1"/><rect x="24" y="0" width="2" height="1"/><rect x="26" y="1" width="2" height="1"/><rect x="28" y="0" width="2" height="1"/><rect x="30" y="1" width="2" height="1"/><rect x="32" y="0" width="2" height="1"/><rect x="34" y="1" width="2" height="1"/></g></svg>
<svg class="r" style="left:705px;top:645px;shape-rendering:crispEdges" width="76" height="2" viewBox="0 0 76 2"><g fill="#c8302c"><rect x="0" y="0" width="2" height="1"/><rect x="2" y="1" width="2" height="1"/><rect x="4" y="0" width="2" height="1"/><rect x="6" y="1" width="2" height="1"/><rect x="8" y="0" width="2" height="1"/><rect x="10" y="1" width="2" height="1"/><rect x="12" y="0" width="2" height="1"/><rect x="14" y="1" width="2" height="1"/><rect x="16" y="0" width="2" height="1"/><rect x="18" y="1" width="2" height="1"/><rect x="20" y="0" width="2" height="1"/><rect x="22" y="1" width="2" height="1"/><rect x="24" y="0" width="2" height="1"/><rect x="26" y="1" width="2" height="1"/><rect x="28" y="0" width="2" height="1"/><rect x="30" y="1" width="2" height="1"/><rect x="32" y="0" width="2" height="1"/><rect x="34" y="1" width="2" height="1"/><rect x="36" y="0" width="2" height="1"/><rect x="38" y="1" width="2" height="1"/><rect x="40" y="0" width="2" height="1"/><rect x="42" y="1" width="2" height="1"/><rect x="44" y="0" width="2" height="1"/><rect x="46" y="1" width="2" height="1"/><rect x="48" y="0" width="2" height="1"/><rect x="50" y="1" width="2" height="1"/><rect x="52" y="0" width="2" height="1"/><rect x="54" y="1" width="2" height="1"/><rect x="56" y="0" width="2" height="1"/><rect x="58" y="1" width="2" height="1"/><rect x="60" y="0" width="2" height="1"/><rect x="62" y="1" width="2" height="1"/><rect x="64" y="0" width="2" height="1"/><rect x="66" y="1" width="2" height="1"/><rect x="68" y="0" width="2" height="1"/><rect x="70" y="1" width="2" height="1"/><rect x="72" y="0" width="2" height="1"/><rect x="74" y="1" width="2" height="1"/></g></svg>
<svg class="r" style="left:786px;top:645px;shape-rendering:crispEdges" width="65" height="2" viewBox="0 0 65 2"><g fill="#c8302c"><rect x="0" y="0" width="2" height="1"/><rect x="2" y="1" width="2" height="1"/><rect x="4" y="0" width="2" height="1"/><rect x="6" y="1" width="2" height="1"/><rect x="8" y="0" width="2" height="1"/><rect x="10" y="1" width="2" height="1"/><rect x="12" y="0" width="2" height="1"/><rect x="14" y="1" width="2" height="1"/><rect x="16" y="0" width="2" height="1"/><rect x="18" y="1" width="2" height="1"/><rect x="20" y="0" width="2" height="1"/><rect x="22" y="1" width="2" height="1"/><rect x="24" y="0" width="2" height="1"/><rect x="26" y="1" width="2" height="1"/><rect x="28" y="0" width="2" height="1"/><rect x="30" y="1" width="2" height="1"/><rect x="32" y="0" width="2" height="1"/><rect x="34" y="1" width="2" height="1"/><rect x="36" y="0" width="2" height="1"/><rect x="38" y="1" width="2" height="1"/><rect x="40" y="0" width="2" height="1"/><rect x="42" y="1" width="2" height="1"/><rect x="44" y="0" width="2" height="1"/><rect x="46" y="1" width="2" height="1"/><rect x="48" y="0" width="2" height="1"/><rect x="50" y="1" width="2" height="1"/><rect x="52" y="0" width="2" height="1"/><rect x="54" y="1" width="2" height="1"/><rect x="56" y="0" width="2" height="1"/><rect x="58" y="1" width="2" height="1"/><rect x="60" y="0" width="2" height="1"/><rect x="62" y="1" width="2" height="1"/><rect x="64" y="0" width="2" height="1"/></g></svg>
<svg class="r" style="left:858px;top:645px;shape-rendering:crispEdges" width="119" height="2" viewBox="0 0 119 2"><g fill="#c8302c"><rect x="0" y="0" width="2" height="1"/><rect x="2" y="1" width="2" height="1"/><rect x="4" y="0" width="2" height="1"/><rect x="6" y="1" width="2" height="1"/><rect x="8" y="0" width="2" height="1"/><rect x="10" y="1" width="2" height="1"/><rect x="12" y="0" width="2" height="1"/><rect x="14" y="1" width="2" height="1"/><rect x="16" y="0" width="2" height="1"/><rect x="18" y="1" width="2" height="1"/><rect x="20" y="0" width="2" height="1"/><rect x="22" y="1" width="2" height="1"/><rect x="24" y="0" width="2" height="1"/><rect x="26" y="1" width="2" height="1"/><rect x="28" y="0" width="2" height="1"/><rect x="30" y="1" width="2" height="1"/><rect x="32" y="0" width="2" height="1"/><rect x="34" y="1" width="2" height="1"/><rect x="36" y="0" width="2" height="1"/><rect x="38" y="1" width="2" height="1"/><rect x="40" y="0" width="2" height="1"/><rect x="42" y="1" width="2" height="1"/><rect x="44" y="0" width="2" height="1"/><rect x="46" y="1" width="2" height="1"/><rect x="48" y="0" width="2" height="1"/><rect x="50" y="1" width="2" height="1"/><rect x="52" y="0" width="2" height="1"/><rect x="54" y="1" width="2" height="1"/><rect x="56" y="0" width="2" height="1"/><rect x="58" y="1" width="2" height="1"/><rect x="60" y="0" width="2" height="1"/><rect x="62" y="1" width="2" height="1"/><rect x="64" y="0" width="2" height="1"/><rect x="66" y="1" width="2" height="1"/><rect x="68" y="0" width="2" height="1"/><rect x="70" y="1" width="2" height="1"/><rect x="72" y="0" width="2" height="1"/><rect x="74" y="1" width="2" height="1"/><rect x="76" y="0" width="2" height="1"/><rect x="78" y="1" width="2" height="1"/><rect x="80" y="0" width="2" height="1"/><rect x="82" y="1" width="2" height="1"/><rect x="84" y="0" width="2" height="1"/><rect x="86" y="1" width="2" height="1"/><rect x="88" y="0" width="2" height="1"/><rect x="90" y="1" width="2" height="1"/><rect x="92" y="0" width="2" height="1"/><rect x="94" y="1" width="2" height="1"/><rect x="96" y="0" width="2" height="1"/><rect x="98" y="1" width="2" height="1"/><rect x="100" y="0" width="2" height="1"/><rect x="102" y="1" width="2" height="1"/><rect x="104" y="0" width="2" height="1"/><rect x="106" y="1" width="2" height="1"/><rect x="108" y="0" width="2" height="1"/><rect x="110" y="1" width="2" height="1"/><rect x="112" y="0" width="2" height="1"/><rect x="114" y="1" width="2" height="1"/><rect x="116" y="0" width="2" height="1"/><rect x="118" y="1" width="2" height="1"/></g></svg>
<svg class="r" style="left:369px;top:676px;shape-rendering:crispEdges" width="63" height="2" viewBox="0 0 63 2"><g fill="#c8302c"><rect x="0" y="0" width="2" height="1"/><rect x="2" y="1" width="2" height="1"/><rect x="4" y="0" width="2" height="1"/><rect x="6" y="1" width="2" height="1"/><rect x="8" y="0" width="2" height="1"/><rect x="10" y="1" width="2" height="1"/><rect x="12" y="0" width="2" height="1"/><rect x="14" y="1" width="2" height="1"/><rect x="16" y="0" width="2" height="1"/><rect x="18" y="1" width="2" height="1"/><rect x="20" y="0" width="2" height="1"/><rect x="22" y="1" width="2" height="1"/><rect x="24" y="0" width="2" height="1"/><rect x="26" y="1" width="2" height="1"/><rect x="28" y="0" width="2" height="1"/><rect x="30" y="1" width="2" height="1"/><rect x="32" y="0" width="2" height="1"/><rect x="34" y="1" width="2" height="1"/><rect x="36" y="0" width="2" height="1"/><rect x="38" y="1" width="2" height="1"/><rect x="40" y="0" width="2" height="1"/><rect x="42" y="1" width="2" height="1"/><rect x="44" y="0" width="2" height="1"/><rect x="46" y="1" width="2" height="1"/><rect x="48" y="0" width="2" height="1"/><rect x="50" y="1" width="2" height="1"/><rect x="52" y="0" width="2" height="1"/><rect x="54" y="1" width="2" height="1"/><rect x="56" y="0" width="2" height="1"/><rect x="58" y="1" width="2" height="1"/><rect x="60" y="0" width="2" height="1"/><rect x="62" y="1" width="2" height="1"/></g></svg>
<svg class="r" style="left:439px;top:676px;shape-rendering:crispEdges" width="75" height="2" viewBox="0 0 75 2"><g fill="#c8302c"><rect x="0" y="0" width="2" height="1"/><rect x="2" y="1" width="2" height="1"/><rect x="4" y="0" width="2" height="1"/><rect x="6" y="1" width="2" height="1"/><rect x="8" y="0" width="2" height="1"/><rect x="10" y="1" width="2" height="1"/><rect x="12" y="0" width="2" height="1"/><rect x="14" y="1" width="2" height="1"/><rect x="16" y="0" width="2" height="1"/><rect x="18" y="1" width="2" height="1"/><rect x="20" y="0" width="2" height="1"/><rect x="22" y="1" width="2" height="1"/><rect x="24" y="0" width="2" height="1"/><rect x="26" y="1" width="2" height="1"/><rect x="28" y="0" width="2" height="1"/><rect x="30" y="1" width="2" height="1"/><rect x="32" y="0" width="2" height="1"/><rect x="34" y="1" width="2" height="1"/><rect x="36" y="0" width="2" height="1"/><rect x="38" y="1" width="2" height="1"/><rect x="40" y="0" width="2" height="1"/><rect x="42" y="1" width="2" height="1"/><rect x="44" y="0" width="2" height="1"/><rect x="46" y="1" width="2" height="1"/><rect x="48" y="0" width="2" height="1"/><rect x="50" y="1" width="2" height="1"/><rect x="52" y="0" width="2" height="1"/><rect x="54" y="1" width="2" height="1"/><rect x="56" y="0" width="2" height="1"/><rect x="58" y="1" width="2" height="1"/><rect x="60" y="0" width="2" height="1"/><rect x="62" y="1" width="2" height="1"/><rect x="64" y="0" width="2" height="1"/><rect x="66" y="1" width="2" height="1"/><rect x="68" y="0" width="2" height="1"/><rect x="70" y="1" width="2" height="1"/><rect x="72" y="0" width="2" height="1"/><rect x="74" y="1" width="2" height="1"/></g></svg>
<svg class="r" style="left:523px;top:676px;shape-rendering:crispEdges" width="54" height="2" viewBox="0 0 54 2"><g fill="#c8302c"><rect x="0" y="0" width="2" height="1"/><rect x="2" y="1" width="2" height="1"/><rect x="4" y="0" width="2" height="1"/><rect x="6" y="1" width="2" height="1"/><rect x="8" y="0" width="2" height="1"/><rect x="10" y="1" width="2" height="1"/><rect x="12" y="0" width="2" height="1"/><rect x="14" y="1" width="2" height="1"/><rect x="16" y="0" width="2" height="1"/><rect x="18" y="1" width="2" height="1"/><rect x="20" y="0" width="2" height="1"/><rect x="22" y="1" width="2" height="1"/><rect x="24" y="0" width="2" height="1"/><rect x="26" y="1" width="2" height="1"/><rect x="28" y="0" width="2" height="1"/><rect x="30" y="1" width="2" height="1"/><rect x="32" y="0" width="2" height="1"/><rect x="34" y="1" width="2" height="1"/><rect x="36" y="0" width="2" height="1"/><rect x="38" y="1" width="2" height="1"/><rect x="40" y="0" width="2" height="1"/><rect x="42" y="1" width="2" height="1"/><rect x="44" y="0" width="2" height="1"/><rect x="46" y="1" width="2" height="1"/><rect x="48" y="0" width="2" height="1"/><rect x="50" y="1" width="2" height="1"/><rect x="52" y="0" width="2" height="1"/></g></svg>
<svg class="r" style="left:581px;top:676px;shape-rendering:crispEdges" width="96" height="2" viewBox="0 0 96 2"><g fill="#c8302c"><rect x="0" y="0" width="2" height="1"/><rect x="2" y="1" width="2" height="1"/><rect x="4" y="0" width="2" height="1"/><rect x="6" y="1" width="2" height="1"/><rect x="8" y="0" width="2" height="1"/><rect x="10" y="1" width="2" height="1"/><rect x="12" y="0" width="2" height="1"/><rect x="14" y="1" width="2" height="1"/><rect x="16" y="0" width="2" height="1"/><rect x="18" y="1" width="2" height="1"/><rect x="20" y="0" width="2" height="1"/><rect x="22" y="1" width="2" height="1"/><rect x="24" y="0" width="2" height="1"/><rect x="26" y="1" width="2" height="1"/><rect x="28" y="0" width="2" height="1"/><rect x="30" y="1" width="2" height="1"/><rect x="32" y="0" width="2" height="1"/><rect x="34" y="1" width="2" height="1"/><rect x="36" y="0" width="2" height="1"/><rect x="38" y="1" width="2" height="1"/><rect x="40" y="0" width="2" height="1"/><rect x="42" y="1" width="2" height="1"/><rect x="44" y="0" width="2" height="1"/><rect x="46" y="1" width="2" height="1"/><rect x="48" y="0" width="2" height="1"/><rect x="50" y="1" width="2" height="1"/><rect x="52" y="0" width="2" height="1"/><rect x="54" y="1" width="2" height="1"/><rect x="56" y="0" width="2" height="1"/><rect x="58" y="1" width="2" height="1"/><rect x="60" y="0" width="2" height="1"/><rect x="62" y="1" width="2" height="1"/><rect x="64" y="0" width="2" height="1"/><rect x="66" y="1" width="2" height="1"/><rect x="68" y="0" width="2" height="1"/><rect x="70" y="1" width="2" height="1"/><rect x="72" y="0" width="2" height="1"/><rect x="74" y="1" width="2" height="1"/><rect x="76" y="0" width="2" height="1"/><rect x="78" y="1" width="2" height="1"/><rect x="80" y="0" width="2" height="1"/><rect x="82" y="1" width="2" height="1"/><rect x="84" y="0" width="2" height="1"/><rect x="86" y="1" width="2" height="1"/><rect x="88" y="0" width="2" height="1"/><rect x="90" y="1" width="2" height="1"/><rect x="92" y="0" width="2" height="1"/><rect x="94" y="1" width="2" height="1"/></g></svg>
<svg class="r" style="left:684px;top:676px;shape-rendering:crispEdges" width="96" height="2" viewBox="0 0 96 2"><g fill="#c8302c"><rect x="0" y="0" width="2" height="1"/><rect x="2" y="1" width="2" height="1"/><rect x="4" y="0" width="2" height="1"/><rect x="6" y="1" width="2" height="1"/><rect x="8" y="0" width="2" height="1"/><rect x="10" y="1" width="2" height="1"/><rect x="12" y="0" width="2" height="1"/><rect x="14" y="1" width="2" height="1"/><rect x="16" y="0" width="2" height="1"/><rect x="18" y="1" width="2" height="1"/><rect x="20" y="0" width="2" height="1"/><rect x="22" y="1" width="2" height="1"/><rect x="24" y="0" width="2" height="1"/><rect x="26" y="1" width="2" height="1"/><rect x="28" y="0" width="2" height="1"/><rect x="30" y="1" width="2" height="1"/><rect x="32" y="0" width="2" height="1"/><rect x="34" y="1" width="2" height="1"/><rect x="36" y="0" width="2" height="1"/><rect x="38" y="1" width="2" height="1"/><rect x="40" y="0" width="2" height="1"/><rect x="42" y="1" width="2" height="1"/><rect x="44" y="0" width="2" height="1"/><rect x="46" y="1" width="2" height="1"/><rect x="48" y="0" width="2" height="1"/><rect x="50" y="1" width="2" height="1"/><rect x="52" y="0" width="2" height="1"/><rect x="54" y="1" width="2" height="1"/><rect x="56" y="0" width="2" height="1"/><rect x="58" y="1" width="2" height="1"/><rect x="60" y="0" width="2" height="1"/><rect x="62" y="1" width="2" height="1"/><rect x="64" y="0" width="2" height="1"/><rect x="66" y="1" width="2" height="1"/><rect x="68" y="0" width="2" height="1"/><rect x="70" y="1" width="2" height="1"/><rect x="72" y="0" width="2" height="1"/><rect x="74" y="1" width="2" height="1"/><rect x="76" y="0" width="2" height="1"/><rect x="78" y="1" width="2" height="1"/><rect x="80" y="0" width="2" height="1"/><rect x="82" y="1" width="2" height="1"/><rect x="84" y="0" width="2" height="1"/><rect x="86" y="1" width="2" height="1"/><rect x="88" y="0" width="2" height="1"/><rect x="90" y="1" width="2" height="1"/><rect x="92" y="0" width="2" height="1"/><rect x="94" y="1" width="2" height="1"/></g></svg>
<svg class="r" style="left:786px;top:676px;shape-rendering:crispEdges" width="72" height="2" viewBox="0 0 72 2"><g fill="#c8302c"><rect x="0" y="0" width="2" height="1"/><rect x="2" y="1" width="2" height="1"/><rect x="4" y="0" width="2" height="1"/><rect x="6" y="1" width="2" height="1"/><rect x="8" y="0" width="2" height="1"/><rect x="10" y="1" width="2" height="1"/><rect x="12" y="0" width="2" height="1"/><rect x="14" y="1" width="2" height="1"/><rect x="16" y="0" width="2" height="1"/><rect x="18" y="1" width="2" height="1"/><rect x="20" y="0" width="2" height="1"/><rect x="22" y="1" width="2" height="1"/><rect x="24" y="0" width="2" height="1"/><rect x="26" y="1" width="2" height="1"/><rect x="28" y="0" width="2" height="1"/><rect x="30" y="1" width="2" height="1"/><rect x="32" y="0" width="2" height="1"/><rect x="34" y="1" width="2" height="1"/><rect x="36" y="0" width="2" height="1"/><rect x="38" y="1" width="2" height="1"/><rect x="40" y="0" width="2" height="1"/><rect x="42" y="1" width="2" height="1"/><rect x="44" y="0" width="2" height="1"/><rect x="46" y="1" width="2" height="1"/><rect x="48" y="0" width="2" height="1"/><rect x="50" y="1" width="2" height="1"/><rect x="52" y="0" width="2" height="1"/><rect x="54" y="1" width="2" height="1"/><rect x="56" y="0" width="2" height="1"/><rect x="58" y="1" width="2" height="1"/><rect x="60" y="0" width="2" height="1"/><rect x="62" y="1" width="2" height="1"/><rect x="64" y="0" width="2" height="1"/><rect x="66" y="1" width="2" height="1"/><rect x="68" y="0" width="2" height="1"/><rect x="70" y="1" width="2" height="1"/></g></svg>
<svg class="r" style="left:864px;top:676px;shape-rendering:crispEdges" width="40" height="2" viewBox="0 0 40 2"><g fill="#c8302c"><rect x="0" y="0" width="2" height="1"/><rect x="2" y="1" width="2" height="1"/><rect x="4" y="0" width="2" height="1"/><rect x="6" y="1" width="2" height="1"/><rect x="8" y="0" width="2" height="1"/><rect x="10" y="1" width="2" height="1"/><rect x="12" y="0" width="2" height="1"/><rect x="14" y="1" width="2" height="1"/><rect x="16" y="0" width="2" height="1"/><rect x="18" y="1" width="2" height="1"/><rect x="20" y="0" width="2" height="1"/><rect x="22" y="1" width="2" height="1"/><rect x="24" y="0" width="2" height="1"/><rect x="26" y="1" width="2" height="1"/><rect x="28" y="0" width="2" height="1"/><rect x="30" y="1" width="2" height="1"/><rect x="32" y="0" width="2" height="1"/><rect x="34" y="1" width="2" height="1"/><rect x="36" y="0" width="2" height="1"/><rect x="38" y="1" width="2" height="1"/></g></svg>
<svg class="r" style="left:910px;top:676px;shape-rendering:crispEdges" width="36" height="2" viewBox="0 0 36 2"><g fill="#c8302c"><rect x="0" y="0" width="2" height="1"/><rect x="2" y="1" width="2" height="1"/><rect x="4" y="0" width="2" height="1"/><rect x="6" y="1" width="2" height="1"/><rect x="8" y="0" width="2" height="1"/><rect x="10" y="1" width="2" height="1"/><rect x="12" y="0" width="2" height="1"/><rect x="14" y="1" width="2" height="1"/><rect x="16" y="0" width="2" height="1"/><rect x="18" y="1" width="2" height="1"/><rect x="20" y="0" width="2" height="1"/><rect x="22" y="1" width="2" height="1"/><rect x="24" y="0" width="2" height="1"/><rect x="26" y="1" width="2" height="1"/><rect x="28" y="0" width="2" height="1"/><rect x="30" y="1" width="2" height="1"/><rect x="32" y="0" width="2" height="1"/><rect x="34" y="1" width="2" height="1"/></g></svg>
<div class="r" style="left:0px;top:0px;width:1366px;height:50px;background:#e3e3e3;"></div>
<div class="r" style="left:772px;top:0px;width:128px;height:3px;background:#f7d900;border-radius:0 0 3px 3px"></div>
<div id="t14" class="t" style="left:521.23px;top:7.02px;font-size:12.50px;color:#444;font-family:'Liberation Sans', sans-serif;font-weight:normal;font-style:normal;transform:scaleX(0.9608);">Tugas Komputer Triplek dan Kertas Minyak - Microsoft Word</div>
<div class="r" style="left:0px;top:25px;width:59px;height:24px;background:#2b2b2b;"></div>
<div id="t15" class="t" style="left:18.13px;top:32.02px;font-size:12.50px;color:#fff;font-family:'Liberation Sans', sans-serif;font-weight:normal;font-style:normal;transform:scaleX(0.8453);">FILE</div>
<div class="r" style="left:63px;top:25px;width:62px;height:25px;background:#f3f3f3;border:1px solid #ababab;border-bottom:none"></div>
<div id="t16" class="t" style="left:75.42px;top:32.02px;font-size:12.50px;color:#2f5592;font-family:'Liberation Sans', sans-serif;font-weight:normal;font-style:normal;transform:scaleX(0.9517);">HOME</div>
<div id="t17" class="t" style="left:139.03px;top:32.02px;font-size:12.50px;color:#262626;font-family:'Liberation Sans', sans-serif;font-weight:normal;font-style:normal;transform:scaleX(0.8374);">INSERT</div>
<div id="t18" class="t" style="left:206.11px;top:32.02px;font-size:12.50px;color:#262626;font-family:'Liberation Sans', sans-serif;font-weight:normal;font-style:normal;transform:scaleX(0.8716);">DESIGN</div>
<div id="t19" class="t" style="left:275.08px;top:32.02px;font-size:12.50px;color:#262626;font-family:'Liberation Sans', sans-serif;font-weight:normal;font-style:normal;transform:scaleX(0.8970);">PAGE LAYOUT</div>
<div id="t20" class="t" style="left:381.18px;top:32.02px;font-size:12.50px;color:#262626;font-family:'Liberation Sans', sans-serif;font-weight:normal;font-style:normal;transform:scaleX(0.7992);">REFERENCES</div>
<div id="t21" class="t" style="left:477.56px;top:32.02px;font-size:12.50px;color:#262626;font-family:'Liberation Sans', sans-serif;font-weight:normal;font-style:normal;transform:scaleX(0.9166);">MAILINGS</div>
<div id="t22" class="t" style="left:560.16px;top:32.02px;font-size:12.50px;color:#262626;font-family:'Liberation Sans', sans-serif;font-weight:normal;font-style:normal;transform:scaleX(0.8208);">REVIEW</div>
<div id="t23" class="t" style="left:629.95px;top:32.02px;font-size:12.50px;color:#262626;font-family:'Liberation Sans', sans-serif;font-weight:normal;font-style:normal;transform:scaleX(0.8413);">VIEW</div>
<div id="t24" class="t" style="left:685.56px;top:32.02px;font-size:12.50px;color:#262626;font-family:'Liberation Sans', sans-serif;font-weight:normal;font-style:normal;transform:scaleX(0.8220);">DEVELOPER</div>
<div id="t25" class="t" style="left:1298.87px;top:30.82px;font-size:12.50px;color:#444;font-family:'Liberation Sans', sans-serif;font-weight:normal;font-style:normal;transform:scaleX(0.9388);">Sign in</div>
<div class="r" style="left:0px;top:49px;width:1366px;height:94px;background:#f3f3f3;border-top:1px solid #ababab;border-bottom:1px solid #b9b9b9"></div>
<div class="r" style="left:64px;top:49px;width:60px;height:1px;background:#f3f3f3;"></div>
<div class="r" style="left:157px;top:54px;width:1px;height:84px;background:#c2c2c2;"></div>
<div class="r" style="left:420px;top:54px;width:1px;height:84px;background:#c2c2c2;"></div>
<div class="r" style="left:645px;top:54px;width:1px;height:84px;background:#c2c2c2;"></div>
<div class="r" style="left:1252px;top:54px;width:1px;height:84px;background:#c2c2c2;"></div>
<div class="r" style="left:1330px;top:54px;width:1px;height:84px;background:#c2c2c2;"></div>
<div id="t26" class="t" style="left:45.20px;top:129.06px;font-size:11.50px;color:#444;font-family:'Liberation Sans', sans-serif;font-weight:normal;font-style:normal;transform:scaleX(1.0332);">Clipboard</div>
<div id="t27" class="t" style="left:268.62px;top:129.06px;font-size:11.50px;color:#444;font-family:'Liberation Sans', sans-serif;font-weight:normal;font-style:normal;transform:scaleX(1.0369);">Font</div>
<div id="t28" class="t" style="left:497.56px;top:129.06px;font-size:11.50px;color:#444;font-family:'Liberation Sans', sans-serif;font-weight:normal;font-style:normal;transform:scaleX(0.9956);">Paragraph</div>
<div id="t29" class="t" style="left:924.48px;top:129.06px;font-size:11.50px;color:#444;font-family:'Liberation Sans', sans-serif;font-weight:normal;font-style:normal;transform:scaleX(0.9872);">Styles</div>
<div id="t30" class="t" style="left:1271.39px;top:129.06px;font-size:11.50px;color:#444;font-family:'Liberation Sans', sans-serif;font-weight:normal;font-style:normal;transform:scaleX(1.0691);">Editing</div>
<div id="t31" class="t" style="left:10.57px;top:93.66px;font-size:11.50px;color:#262626;font-family:'Liberation Sans', sans-serif;font-weight:normal;font-style:normal;transform:scaleX(0.9833);">Paste</div>
<div id="t32" class="t" style="left:68.09px;top:59.66px;font-size:11.50px;color:#9a9a9a;font-family:'Liberation Sans', sans-serif;font-weight:normal;font-style:normal;transform:scaleX(1.0384);">Cut</div>
<div id="t33" class="t" style="left:68.10px;top:82.56px;font-size:11.50px;color:#9a9a9a;font-family:'Liberation Sans', sans-serif;font-weight:normal;font-style:normal;transform:scaleX(1.0208);">Copy</div>
<div id="t34" class="t" style="left:67.73px;top:105.66px;font-size:11.50px;color:#262626;font-family:'Liberation Sans', sans-serif;font-weight:normal;font-style:normal;transform:scaleX(1.0317);">Format Painter</div>
<div class="r" style="left:162px;top:61px;width:94px;height:23px;background:#fff;border:1px solid #ababab"></div>
<div class="r" style="left:256px;top:61px;width:43px;height:23px;background:#fff;border:1px solid #ababab"></div>
<div id="t35" class="t" style="left:165.29px;top:67.86px;font-size:11.50px;color:#262626;font-family:'Liberation Sans', sans-serif;font-weight:normal;font-style:normal;transform:scaleX(1.0384);">Calibri (Body)</div>
<div id="t36" class="t" style="left:257.88px;top:67.86px;font-size:11.50px;color:#262626;font-family:'Liberation Sans', sans-serif;font-weight:normal;font-style:normal;transform:scaleX(1.0512);">16</div>
<div class="r" style="left:651px;top:56px;width:593px;height:60px;background:#fff;border:1px solid #b2b2b2"></div>
<div class="r" style="left:1229px;top:56px;width:15px;height:60px;background:#fff;border:1px solid #b2b2b2"></div>
<div class="r" style="left:1229px;top:77px;width:15px;height:1px;background:#b2b2b2;"></div>
<div class="r" style="left:1229px;top:96px;width:15px;height:1px;background:#b2b2b2;"></div>
<div id="t37" class="t" style="left:663.23px;top:98.06px;font-size:11.50px;color:#555;font-family:'Liberation Sans', sans-serif;font-weight:normal;font-style:normal;transform:scaleX(1.0527);">¶ Normal</div>
<div id="t38" class="t" style="left:729.16px;top:98.06px;font-size:11.50px;color:#555;font-family:'Liberation Sans', sans-serif;font-weight:normal;font-style:normal;transform:scaleX(0.9874);">¶ No Spac...</div>
<div id="t39" class="t" style="left:804.02px;top:98.06px;font-size:11.50px;color:#555;font-family:'Liberation Sans', sans-serif;font-weight:normal;font-style:normal;transform:scaleX(1.0406);">Heading 1</div>
<div id="t40" class="t" style="left:876.42px;top:98.06px;font-size:11.50px;color:#555;font-family:'Liberation Sans', sans-serif;font-weight:normal;font-style:normal;transform:scaleX(1.0429);">Heading 2</div>
<div id="t41" class="t" style="left:964.01px;top:98.06px;font-size:11.50px;color:#555;font-family:'Liberation Sans', sans-serif;font-weight:normal;font-style:normal;transform:scaleX(1.1050);">Title</div>
<div id="t42" class="t" style="left:1027.44px;top:98.06px;font-size:11.50px;color:#555;font-family:'Liberation Sans', sans-serif;font-weight:normal;font-style:normal;transform:scaleX(1.0716);">Subtitle</div>
<div id="t43" class="t" style="left:1088.47px;top:98.06px;font-size:11.50px;color:#555;font-family:'Liberation Sans', sans-serif;font-weight:normal;font-style:normal;transform:scaleX(1.0071);">Subtle Em...</div>
<div id="t44" class="t" style="left:1166.04px;top:98.06px;font-size:11.50px;color:#555;font-family:'Liberation Sans', sans-serif;font-weight:normal;font-style:normal;transform:scaleX(1.0134);">Emphasis</div>
<div class="r" style="left:658px;top:56px;width:59px;height:32px;overflow:hidden"></div>
<div id="t45" class="t" style="left:658.58px;top:71.57px;font-size:13.50px;color:#000;font-family:'Liberation Sans', sans-serif;font-weight:normal;font-style:normal;transform:scaleX(0.8896);clip-path:inset(0 3% 0 0);">AaBbCcDc</div>
<div id="t46" class="t" style="left:730.68px;top:71.57px;font-size:13.50px;color:#000;font-family:'Liberation Sans', sans-serif;font-weight:normal;font-style:normal;transform:scaleX(0.8865);clip-path:inset(0 3% 0 0);">AaBbCcDc</div>
<div id="t47" class="t" style="left:802.67px;top:69.88px;font-size:17.50px;color:#4a7dbb;font-family:'Liberation Sans', sans-serif;font-weight:normal;font-style:normal;transform:scaleX(0.9104);clip-path:inset(0 6% 0 0);-webkit-text-stroke:0.35px #fff;">AaBbCc</div>
<div id="t48" class="t" style="left:874.47px;top:70.72px;font-size:14.50px;color:#4a7dbb;font-family:'Liberation Sans', sans-serif;font-weight:normal;font-style:normal;transform:scaleX(0.9245);clip-path:inset(0 5% 0 0);-webkit-text-stroke:0.3px #fff;">AaBbCcD</div>
<div id="t49" class="t" style="left:947.14px;top:60.97px;font-size:28.50px;color:#111;font-family:'Liberation Sans', sans-serif;font-weight:normal;font-style:normal;transform:scaleX(1.0222);clip-path:inset(5px 17% 0 0);-webkit-text-stroke:0.5px #fff;">AaBb</div>
<div id="t50" class="t" style="left:1018.58px;top:72.22px;font-size:12.50px;color:#5a5a5a;font-family:'Liberation Sans', sans-serif;font-weight:normal;font-style:normal;transform:scaleX(0.9565);letter-spacing:1px;clip-path:inset(0 5% 0 0);">AaBbCcD</div>
<div id="t51" class="t" style="left:1091.39px;top:71.57px;font-size:13.50px;color:#404040;font-family:'Liberation Sans', sans-serif;font-weight:normal;font-style:italic;transform:scaleX(0.8791);clip-path:inset(0 4% 0 0);">AaBbCcDc</div>
<div id="t52" class="t" style="left:1163.28px;top:71.57px;font-size:13.50px;color:#000;font-family:'Liberation Sans', sans-serif;font-weight:normal;font-style:italic;transform:scaleX(0.8731);clip-path:inset(0 4% 0 0);">AaBbCcDc</div>
<div id="t53" class="t" style="left:1277.59px;top:59.96px;font-size:11.50px;color:#262626;font-family:'Liberation Sans', sans-serif;font-weight:normal;font-style:normal;transform:scaleX(1.0681);">Find</div>
<div id="t54" class="t" style="left:1277.66px;top:83.56px;font-size:11.50px;color:#262626;font-family:'Liberation Sans', sans-serif;font-weight:normal;font-style:normal;transform:scaleX(0.9914);">Replace</div>
<div id="t55" class="t" style="left:1278.09px;top:105.86px;font-size:11.50px;color:#262626;font-family:'Liberation Sans', sans-serif;font-weight:normal;font-style:normal;transform:scaleX(0.9757);">Select</div>
<div class="r" style="left:0px;top:143px;width:22px;height:21px;background:#c9c9c9;"></div>
<div class="r" style="left:3px;top:146px;width:16px;height:15px;background:#fff;"></div>
<div class="r" style="left:277px;top:148px;width:54px;height:10px;background:#c6c6c6;"></div>
<div class="r" style="left:331px;top:148px;width:666px;height:10px;background:#fff;"></div>
<div class="r" style="left:997px;top:148px;width:96px;height:10px;background:#c6c6c6;"></div>
<div class="r" style="left:5px;top:183px;width:11px;height:20px;background:#c6c6c6;"></div>
<div class="r" style="left:5px;top:203px;width:11px;height:503px;background:#fff;"></div>
<div class="r" style="left:1350px;top:145px;width:15px;height:561px;background:linear-gradient(#b6b6b6,#a9a9a9);"></div>
<div class="r" style="left:1350px;top:145px;width:15px;height:16px;background:#fff;border:1px solid #a0a0a0"></div>
<div class="r" style="left:1350px;top:160px;width:15px;height:132px;background:#fff;border:1px solid #a0a0a0"></div>
<div class="r" style="left:1351px;top:690px;width:13px;height:14px;background:#fff;"></div>
<svg class="r" style="left:9px;top:2px;" width="18" height="18" viewBox="0 0 18 18"><path d="M1 2.5 L11 1 V17 L1 15.5 Z" fill="#2b579a"/><rect x="10.5" y="2.5" width="6.5" height="13" fill="#fff" stroke="#2b579a" stroke-width="1.2"/><path d="M11 5.5h4.5M11 8h4.5M11 10.5h4.5M11 13h4.5" stroke="#2b579a" stroke-width="1.1"/><path d="M2.6 6 L3.9 12 L5.4 7.5 L6.9 12 L8.3 6" fill="none" stroke="#fff" stroke-width="1.3"/></svg>
<svg class="r" style="left:40px;top:4px;" width="14" height="14" viewBox="0 0 14 14"><rect x="0" y="0" width="14" height="14" fill="#7e57a8"/><rect x="2" y="1.5" width="10" height="6" fill="#f4ecfa"/><rect x="3" y="10" width="8" height="4" fill="#f4ecfa"/><rect x="5.5" y="11" width="2" height="3" fill="#7e57a8"/></svg>
<svg class="r" style="left:68px;top:3px;" width="16" height="15" viewBox="0 0 16 15"><path d="M2.5 6.5 H9.5 C12.5 6.5 14 8.5 14 10.5 C14 12.5 12.5 14 10.5 14" fill="none" stroke="#4d7ab8" stroke-width="2.2" stroke-linecap="round"/><path d="M6 2.5 L2 6.5 L6 10.5" fill="none" stroke="#4d7ab8" stroke-width="2.2" stroke-linecap="round" stroke-linejoin="round"/></svg>
<svg class="r" style="left:89px;top:9px;" width="6" height="4" viewBox="0 0 6 4"><path d="M0 0 H5.5 L2.75 3 Z" fill="#555"/></svg>
<svg class="r" style="left:108px;top:3px;" width="15" height="15" viewBox="0 0 15 15"><path d="M6.0 2.1 A5.4 5.4 0 1 0 9.6 2.3" fill="none" stroke="#3d6a9e" stroke-width="2.1"/><path d="M8.2 0.8 L13.8 0.8 L13.2 2.6 L10 6.8 Z" fill="#3d6a9e"/></svg>
<svg class="r" style="left:132px;top:3px;" width="12" height="16" viewBox="0 0 12 16"><circle cx="4.5" cy="3.5" r="3.2" fill="#b9c9d9" opacity=".8"/><path d="M3.5 3 C3.5 2 5.5 2 5.5 3 V8 L9 9 C10.5 9.5 11 10.5 11 12 V16 H5 L0.5 11 C0 10 1 9 2 9.6 L3.5 10.8 Z" fill="#6a6a6a"/></svg>
<svg class="r" style="left:149px;top:9px;" width="6" height="4" viewBox="0 0 6 4"><path d="M0 0 H6 L3 3 Z" fill="#333"/></svg>
<svg class="r" style="left:170px;top:9px;" width="6" height="6" viewBox="0 0 6 6"><path d="M0 0.5 H5" stroke="#555" stroke-width="1"/><path d="M0 2.5 H5 L2.5 5.5 Z" fill="#555"/></svg>
<div id="t56" class="t" style="left:1229.91px;top:4.99px;font-size:13.00px;color:#5a5a5a;font-family:'Liberation Sans', sans-serif;font-weight:bold;font-style:normal;transform:scaleX(0.9837);">?</div>
<svg class="r" style="left:1257px;top:6px;" width="13" height="10" viewBox="0 0 13 10"><rect x="0.5" y="0.5" width="12" height="9" fill="none" stroke="#5a5a5a"/><path d="M0.5 2.5 H12.5" stroke="#5a5a5a"/><path d="M6.5 8.5 V4.5 M4.5 6.5 L6.5 4.5 L8.5 6.5" fill="none" stroke="#5a5a5a"/></svg>
<div class="r" style="left:1288px;top:12px;width:9px;height:2px;background:#5a5a5a;"></div>
<svg class="r" style="left:1317px;top:7px;" width="10" height="9" viewBox="0 0 10 9"><rect x="0.6" y="3.1" width="7" height="6" fill="none" stroke="#5a5a5a" stroke-width="1.2"/><path d="M2.6 3 V0.6 H9.4 V6.6 H7.6 M2.6 1.6 H9.4" fill="none" stroke="#5a5a5a" stroke-width="1.2"/></svg>
<svg class="r" style="left:1346px;top:7px;" width="10" height="10" viewBox="0 0 10 10"><path d="M1 1 L9 9 M9 1 L1 9" stroke="#444" stroke-width="2.2"/></svg>
<div class="r" style="left:1342px;top:25px;width:24px;height:24px;background:#a6a6a6;"></div>
<svg class="r" style="left:1342px;top:25px;" width="24" height="24" viewBox="0 0 24 24"><ellipse cx="12" cy="8.5" rx="4.6" ry="5.2" fill="#fff"/><path d="M3 24 C3 17 6 14.5 9.5 14 L12 15 L14.5 14 C18 14.5 21 17 21 24 Z" fill="#fff"/></svg>
<svg class="r" style="left:12px;top:57px;" width="30" height="32" viewBox="0 0 30 32"><rect x="1" y="3.5" width="23" height="25" fill="#efc57a"/><path d="M5 3 H19 V7 H5 Z" fill="#6a6a6a"/><rect x="9.5" y="0.5" width="5" height="4" rx="1.5" fill="#6a6a6a"/><circle cx="12" cy="2.5" r="1" fill="#f3f3f3"/><path d="M15.5 12.5 H24 L28.5 17 V30.5 H15.5 Z" fill="#fff" stroke="#6a6a6a" stroke-width="1"/><path d="M23.5 12.5 V17.5 H28.5" fill="none" stroke="#6a6a6a"/></svg>
<svg class="r" style="left:22px;top:113px;" width="5" height="3" viewBox="0 0 5 3"><path d="M0 0 H5 L2.5 3 Z" fill="#666"/></svg>
<svg class="r" style="left:50px;top:56px;" width="14" height="15" viewBox="0 0 14 15"><path d="M3 0.5 L9.5 9.5 M11 0.5 L4.5 9.5" stroke="#b0b0b0" stroke-width="1.4"/><circle cx="3.2" cy="12" r="2.3" fill="none" stroke="#b0b0b0" stroke-width="1.3"/><circle cx="10.8" cy="12" r="2.3" fill="none" stroke="#b0b0b0" stroke-width="1.3"/></svg>
<svg class="r" style="left:49px;top:80px;shape-rendering:crispEdges" width="16" height="14" viewBox="0 0 16 14"><path d="M0.5 0.5 H5.5 L7.5 2.5 V10.5 H0.5 Z" fill="#f3f3f3" stroke="#b0b0b0"/><path d="M6.5 3.5 H11.5 L14.5 6.5 V13.5 H6.5 Z" fill="#f3f3f3" stroke="#b0b0b0"/><path d="M2 3.5h3M2 6.5h3M8.5 8.5h4M8.5 11.5h4" stroke="#b0b0b0"/></svg>
<svg class="r" style="left:49px;top:102px;" width="17" height="15" viewBox="0 0 17 15"><path d="M0.5 9.5 L5.5 4.5 L10.5 9.5 L6.5 13.5 C5 15 2 15 1 13.5 Z" fill="#eab56a"/><path d="M6 4 L9 1.5 L13.5 6 L11 9 Z" fill="#5f5f5f"/><path d="M11.5 2.5 L14 0 L16.5 2.5 L14 5 Z" fill="#5f5f5f"/></svg>
<svg class="r" style="left:146px;top:131px;" width="7" height="7" viewBox="0 0 7 7"><path d="M0.5 6.5 V0.5 H6.5" fill="none" stroke="#8a8a8a"/><path d="M2.5 2.5 L6 6 M6.5 3.5 V6.5 H3.5" fill="none" stroke="#6a6a6a"/></svg>
<svg class="r" style="left:409px;top:131px;" width="7" height="7" viewBox="0 0 7 7"><path d="M0.5 6.5 V0.5 H6.5" fill="none" stroke="#8a8a8a"/><path d="M2.5 2.5 L6 6 M6.5 3.5 V6.5 H3.5" fill="none" stroke="#6a6a6a"/></svg>
<svg class="r" style="left:634px;top:131px;" width="7" height="7" viewBox="0 0 7 7"><path d="M0.5 6.5 V0.5 H6.5" fill="none" stroke="#8a8a8a"/><path d="M2.5 2.5 L6 6 M6.5 3.5 V6.5 H3.5" fill="none" stroke="#6a6a6a"/></svg>
<svg class="r" style="left:1239px;top:131px;" width="7" height="7" viewBox="0 0 7 7"><path d="M0.5 6.5 V0.5 H6.5" fill="none" stroke="#8a8a8a"/><path d="M2.5 2.5 L6 6 M6.5 3.5 V6.5 H3.5" fill="none" stroke="#6a6a6a"/></svg>
<svg class="r" style="left:247px;top:71px;" width="5" height="3" viewBox="0 0 5 3"><path d="M0 0 H5 L2.5 3 Z" fill="#666"/></svg>
<svg class="r" style="left:289px;top:71px;" width="5" height="3" viewBox="0 0 5 3"><path d="M0 0 H5 L2.5 3 Z" fill="#666"/></svg>
<div class="r" style="left:347px;top:61px;width:1px;height:22px;background:#c2c2c2;"></div>
<div class="r" style="left:389px;top:61px;width:1px;height:22px;background:#c2c2c2;"></div>
<div class="r" style="left:310px;top:92px;width:1px;height:22px;background:#c2c2c2;"></div>
<div id="t57" class="t" style="left:304.85px;top:66.37px;font-size:13.50px;color:#505050;font-family:'Liberation Sans', sans-serif;font-weight:bold;font-style:normal;transform:scaleX(1.0267);">A</div>
<svg class="r" style="left:313px;top:65px;" width="5" height="3" viewBox="0 0 5 3"><path d="M0 3 H5 L2.5 0 Z" fill="#5a7ca8"/></svg>
<div id="t58" class="t" style="left:327.30px;top:68.49px;font-size:11.00px;color:#505050;font-family:'Liberation Sans', sans-serif;font-weight:bold;font-style:normal;transform:scaleX(1.1097);">A</div>
<svg class="r" style="left:335px;top:65px;" width="5" height="3" viewBox="0 0 5 3"><path d="M0 0 H5 L2.5 3 Z" fill="#5a7ca8"/></svg>
<div id="t59" class="t" style="left:354.70px;top:65.22px;font-size:12.50px;color:#505050;font-family:'Liberation Sans', sans-serif;font-weight:bold;font-style:normal;transform:scaleX(0.9649);">Aa</div>
<svg class="r" style="left:375px;top:71px;" width="5" height="3" viewBox="0 0 5 3"><path d="M0 0 H5 L2.5 3 Z" fill="#666"/></svg>
<div id="t60" class="t" style="left:398.48px;top:62.84px;font-size:12.00px;color:#555;font-family:'Liberation Sans', sans-serif;font-weight:normal;font-style:normal;transform:scaleX(0.8157);">A</div>
<svg class="r" style="left:399px;top:65px;" width="16" height="16" viewBox="0 0 16 16"><path d="M3 11.5 L10.5 4 C11.3 3.2 12.2 3.2 13 4 L14.5 5.5 C15.3 6.3 15.3 7.2 14.5 8 L7 15.5 Z" fill="#e58fa0"/><path d="M3 11.5 L7 15.5" stroke="#d6788c" stroke-width="1.6"/></svg>
<div id="t61" class="t" style="left:167.78px;top:96.12px;font-size:12.50px;color:#444;font-family:'Liberation Sans', sans-serif;font-weight:bold;font-style:normal;transform:scaleX(0.9833);">B</div>
<div id="t62" class="t" style="left:190.57px;top:96.12px;font-size:12.50px;color:#444;font-family:'Liberation Serif', serif;font-weight:normal;font-style:italic;transform:scaleX(1.4865);">I</div>
<div id="t63" class="t" style="left:211.58px;top:96.12px;font-size:12.50px;color:#444;font-family:'Liberation Sans', sans-serif;font-weight:bold;font-style:normal;transform:scaleX(1.0908);">U</div>
<div class="r" style="left:212px;top:108px;width:9px;height:1px;background:#444;"></div>
<svg class="r" style="left:231px;top:102px;" width="5" height="3" viewBox="0 0 5 3"><path d="M0 0 H5 L2.5 3 Z" fill="#666"/></svg>
<div id="t64" class="t" style="left:242.45px;top:96.54px;font-size:12.00px;color:#555;font-family:'Liberation Sans', sans-serif;font-weight:normal;font-style:normal;transform:scaleX(0.8903);">abc</div>
<div class="r" style="left:243px;top:103px;width:16px;height:1px;background:#555;"></div>
<div id="t65" class="t" style="left:266.91px;top:96.12px;font-size:12.50px;color:#444;font-family:'Liberation Sans', sans-serif;font-weight:bold;font-style:normal;transform:scaleX(1.0626);">x</div>
<div id="t66" class="t" style="left:274.62px;top:103.07px;font-size:7.00px;color:#4a6fa5;font-family:'Liberation Sans', sans-serif;font-weight:normal;font-style:normal;transform:scaleX(1.0930);">2</div>
<div id="t67" class="t" style="left:288.91px;top:96.12px;font-size:12.50px;color:#444;font-family:'Liberation Sans', sans-serif;font-weight:bold;font-style:normal;transform:scaleX(1.0626);">x</div>
<div id="t68" class="t" style="left:296.62px;top:95.57px;font-size:7.00px;color:#555;font-family:'Liberation Sans', sans-serif;font-weight:normal;font-style:normal;transform:scaleX(1.0930);">2</div>
<svg class="r" style="left:319px;top:95px;" width="14" height="14" viewBox="0 0 14 14"><path d="M1.5 13 L5.5 1.5 H8.5 L12.5 13 H10 L8.8 9.5 H5.2 L4 13 Z M5.9 7.5 H8.1 L7 4.2 Z" fill="#e6f0fb" stroke="#4a7fc0" stroke-width="1.3" stroke-linejoin="round"/></svg>
<svg class="r" style="left:338px;top:102px;" width="5" height="3" viewBox="0 0 5 3"><path d="M0 0 H5 L2.5 3 Z" fill="#666"/></svg>
<div id="t69" class="t" style="left:350.55px;top:94.18px;font-size:9.00px;color:#555;font-family:'Liberation Sans', sans-serif;font-weight:bold;font-style:normal;transform:scaleX(0.9613);">ab</div>
<svg class="r" style="left:353px;top:96px;" width="14" height="12" viewBox="0 0 14 12"><path d="M1.5 10.5 L11 1 L13.5 3.5 L4 13 Z" fill="#666"/><path d="M1.5 10.5 L0.5 12.5 L2 12 Z" fill="#444"/></svg>
<div class="r" style="left:351.5px;top:107px;width:16.5px;height:4px;background:#f5f500;"></div>
<svg class="r" style="left:373px;top:102px;" width="5" height="3" viewBox="0 0 5 3"><path d="M0 0 H5 L2.5 3 Z" fill="#666"/></svg>
<div id="t70" class="t" style="left:388.17px;top:95.82px;font-size:12.50px;color:#444;font-family:'Liberation Sans', sans-serif;font-weight:bold;font-style:normal;transform:scaleX(1.0488);">A</div>
<div class="r" style="left:385px;top:107px;width:16px;height:4px;background:#e00000;"></div>
<svg class="r" style="left:407px;top:102px;" width="5" height="3" viewBox="0 0 5 3"><path d="M0 0 H5 L2.5 3 Z" fill="#666"/></svg>
<svg class="r" style="left:428px;top:63px;" width="15" height="16" viewBox="0 0 15 16"><circle cx="3" cy="2.3" r="1.6" fill="#4f6f96"/><circle cx="3" cy="8.4" r="1.6" fill="#4f6f96"/><circle cx="3" cy="14.4" r="1.6" fill="#4f6f96"/><path d="M6 2.3 H14" stroke="#5a5a5a" stroke-width="1.2"/><path d="M6 8.4 H14" stroke="#5a5a5a" stroke-width="1.2"/><path d="M6 14.4 H14" stroke="#5a5a5a" stroke-width="1.2"/></svg>
<svg class="r" style="left:450px;top:71px;" width="5" height="3" viewBox="0 0 5 3"><path d="M0 0 H5 L2.5 3 Z" fill="#666"/></svg>
<svg class="r" style="left:462px;top:63px;" width="16" height="16" viewBox="0 0 16 16"><text x="0" y="5" font-size="6" font-weight="bold" fill="#4f6f96" font-family="Liberation Sans">1</text><text x="0" y="11" font-size="6" font-weight="bold" fill="#4f6f96" font-family="Liberation Sans">2</text><text x="0" y="17" font-size="6" font-weight="bold" fill="#4f6f96" font-family="Liberation Sans">3</text><path d="M6 2.3 H15" stroke="#5a5a5a" stroke-width="1.2"/><path d="M6 8.4 H15" stroke="#5a5a5a" stroke-width="1.2"/><path d="M6 14.4 H15" stroke="#5a5a5a" stroke-width="1.2"/></svg>
<svg class="r" style="left:484px;top:71px;" width="5" height="3" viewBox="0 0 5 3"><path d="M0 0 H5 L2.5 3 Z" fill="#666"/></svg>
<svg class="r" style="left:495px;top:63px;" width="18" height="16" viewBox="0 0 18 16"><text x="0" y="5" font-size="6" font-weight="bold" fill="#4f6f96" font-family="Liberation Sans">1</text><text x="4.5" y="11" font-size="6" font-weight="bold" fill="#4f6f96" font-family="Liberation Sans">a</text><text x="9" y="17" font-size="6" font-weight="bold" fill="#4f6f96" font-family="Liberation Sans">i</text><path d="M6 2.3 H17" stroke="#5a5a5a" stroke-width="1.2"/><path d="M11 8.4 H17" stroke="#5a5a5a" stroke-width="1.2"/><path d="M14 14.4 H17" stroke="#5a5a5a" stroke-width="1.2"/></svg>
<svg class="r" style="left:516px;top:71px;" width="5" height="3" viewBox="0 0 5 3"><path d="M0 0 H5 L2.5 3 Z" fill="#666"/></svg>
<div class="r" style="left:530px;top:61px;width:1px;height:22px;background:#c2c2c2;"></div>
<svg class="r" style="left:537px;top:66px;" width="17" height="12" viewBox="0 0 17 12"><g transform="translate(0,0.5)"><path d="M1 5 L5 1.5 V3.8 H9 V6.2 H5 V8.5 Z" fill="#4f6f96"/></g><path d="M2 0.6 H16.5" stroke="#5a5a5a" stroke-width="1.1"/><path d="M7 3.8 H16.5" stroke="#5a5a5a" stroke-width="1.1"/><path d="M7 7.2 H16.5" stroke="#5a5a5a" stroke-width="1.1"/><path d="M2 10.6 H16.5" stroke="#5a5a5a" stroke-width="1.1"/></svg>
<svg class="r" style="left:559px;top:66px;" width="17" height="12" viewBox="0 0 17 12"><g transform="translate(0,0.5)"><path d="M10 5 L6 1.5 V3.8 H1 V6.2 H6 V8.5 Z" fill="#4f6f96"/></g><path d="M2 0.6 H16.5" stroke="#5a5a5a" stroke-width="1.1"/><path d="M7 3.8 H16.5" stroke="#5a5a5a" stroke-width="1.1"/><path d="M7 7.2 H16.5" stroke="#5a5a5a" stroke-width="1.1"/><path d="M2 10.6 H16.5" stroke="#5a5a5a" stroke-width="1.1"/></svg>
<div class="r" style="left:583px;top:61px;width:1px;height:22px;background:#c2c2c2;"></div>
<div id="t71" class="t" style="left:592.26px;top:62.76px;font-size:9.50px;color:#4f73a8;font-family:'Liberation Sans', sans-serif;font-weight:bold;font-style:normal;transform:scaleX(1.0175);">A</div>
<div id="t72" class="t" style="left:592.15px;top:70.76px;font-size:9.50px;color:#a070c0;font-family:'Liberation Sans', sans-serif;font-weight:bold;font-style:normal;transform:scaleX(1.2367);">Z</div>
<svg class="r" style="left:600px;top:63px;" width="7" height="16" viewBox="0 0 7 16"><path d="M3.5 1 V15 M0.8 11.8 L3.5 15 L6.2 11.8" fill="none" stroke="#5a5a5a" stroke-width="1.2"/></svg>
<div class="r" style="left:614px;top:61px;width:1px;height:22px;background:#c2c2c2;"></div>
<svg class="r" style="left:624px;top:65px;" width="12" height="14" viewBox="0 0 12 14"><path d="M5 1 H11.5 M6.5 1 V13 M9.5 1 V13" stroke="#606060" stroke-width="1.8"/><path d="M6 1 C1 1 0 3 0 4.5 C0 6 1 8 6 8 Z" fill="#606060"/></svg>
<div class="r" style="left:469px;top:92px;width:22px;height:23px;background:#c5d6ee;"></div>
<svg class="r" style="left:429px;top:95px;" width="15" height="15" viewBox="0 0 15 15"><path d="M0 3.5 H14" stroke="#5a5a5a" stroke-width="1.2"/><path d="M0 6.5 H9" stroke="#5a5a5a" stroke-width="1.2"/><path d="M0 9.5 H14" stroke="#5a5a5a" stroke-width="1.2"/><path d="M0 12.5 H9" stroke="#5a5a5a" stroke-width="1.2"/></svg>
<svg class="r" style="left:451px;top:95px;" width="15" height="15" viewBox="0 0 15 15"><path d="M0 3.5 H14" stroke="#5a5a5a" stroke-width="1.2"/><path d="M2.5 6.5 H11.5" stroke="#5a5a5a" stroke-width="1.2"/><path d="M0 9.5 H14" stroke="#5a5a5a" stroke-width="1.2"/><path d="M2.5 12.5 H11.5" stroke="#5a5a5a" stroke-width="1.2"/></svg>
<svg class="r" style="left:473px;top:95px;" width="15" height="15" viewBox="0 0 15 15"><path d="M0 3.5 H14" stroke="#5a5a5a" stroke-width="1.2"/><path d="M5 6.5 H14" stroke="#5a5a5a" stroke-width="1.2"/><path d="M0 9.5 H14" stroke="#5a5a5a" stroke-width="1.2"/><path d="M5 12.5 H14" stroke="#5a5a5a" stroke-width="1.2"/></svg>
<svg class="r" style="left:495px;top:95px;" width="15" height="15" viewBox="0 0 15 15"><path d="M0 3.5 H14" stroke="#5a5a5a" stroke-width="1.2"/><path d="M0 6.5 H14" stroke="#5a5a5a" stroke-width="1.2"/><path d="M0 9.5 H14" stroke="#5a5a5a" stroke-width="1.2"/><path d="M0 12.5 H14" stroke="#5a5a5a" stroke-width="1.2"/></svg>
<div class="r" style="left:517px;top:92px;width:1px;height:22px;background:#c2c2c2;"></div>
<svg class="r" style="left:525px;top:95px;" width="16" height="17" viewBox="0 0 16 17"><path d="M3 1.5 V14.5 M0.5 4 L3 1 L5.5 4 M0.5 12 L3 15 L5.5 12" fill="none" stroke="#4a7fc0" stroke-width="1.3"/><path d="M7.5 3.5 H15 M7.5 6.5 H15 M7.5 9.5 H15 M7.5 12.5 H15" stroke="#5a5a5a" stroke-width="1.2"/></svg>
<svg class="r" style="left:545px;top:102px;" width="5" height="3" viewBox="0 0 5 3"><path d="M0 0 H5 L2.5 3 Z" fill="#666"/></svg>
<div class="r" style="left:559px;top:92px;width:1px;height:22px;background:#c2c2c2;"></div>
<svg class="r" style="left:567px;top:94px;" width="18" height="18" viewBox="0 0 18 18"><path d="M2 7 L7 2 L12 7 L7 12 Z" fill="#fff" stroke="#5a5a5a" stroke-width="1.1"/><path d="M6 3 V0.8 C6 0 8 0 8 0.8 V4" fill="none" stroke="#5a5a5a"/><path d="M12 4 C14.5 4 16 6 15.5 9 L13 7 Z" fill="#4f6f96"/><rect x="0.5" y="13.5" width="16" height="3.5" fill="#fff" stroke="#8a8a8a"/></svg>
<svg class="r" style="left:589px;top:102px;" width="5" height="3" viewBox="0 0 5 3"><path d="M0 0 H5 L2.5 3 Z" fill="#666"/></svg>
<svg class="r" style="left:601px;top:95px;" width="16" height="15" viewBox="0 0 16 15"><g fill="#6a6a6a"><rect x="0" y="0" width="1" height="1"/><rect x="2" y="0" width="1" height="1"/><rect x="4" y="0" width="1" height="1"/><rect x="6" y="0" width="1" height="1"/><rect x="8" y="0" width="1" height="1"/><rect x="10" y="0" width="1" height="1"/><rect x="12" y="0" width="1" height="1"/><rect x="14" y="0" width="1" height="1"/><rect x="0" y="6" width="1" height="1"/><rect x="2" y="6" width="1" height="1"/><rect x="4" y="6" width="1" height="1"/><rect x="6" y="6" width="1" height="1"/><rect x="8" y="6" width="1" height="1"/><rect x="10" y="6" width="1" height="1"/><rect x="12" y="6" width="1" height="1"/><rect x="14" y="6" width="1" height="1"/><rect x="0" y="12" width="1" height="1"/><rect x="2" y="12" width="1" height="1"/><rect x="4" y="12" width="1" height="1"/><rect x="6" y="12" width="1" height="1"/><rect x="8" y="12" width="1" height="1"/><rect x="10" y="12" width="1" height="1"/><rect x="12" y="12" width="1" height="1"/><rect x="14" y="12" width="1" height="1"/><rect x="0" y="0" width="1" height="1"/><rect x="0" y="2" width="1" height="1"/><rect x="0" y="4" width="1" height="1"/><rect x="0" y="6" width="1" height="1"/><rect x="0" y="8" width="1" height="1"/><rect x="0" y="10" width="1" height="1"/><rect x="0" y="12" width="1" height="1"/><rect x="7" y="0" width="1" height="1"/><rect x="7" y="2" width="1" height="1"/><rect x="7" y="4" width="1" height="1"/><rect x="7" y="6" width="1" height="1"/><rect x="7" y="8" width="1" height="1"/><rect x="7" y="10" width="1" height="1"/><rect x="7" y="12" width="1" height="1"/><rect x="14" y="0" width="1" height="1"/><rect x="14" y="2" width="1" height="1"/><rect x="14" y="4" width="1" height="1"/><rect x="14" y="6" width="1" height="1"/><rect x="14" y="8" width="1" height="1"/><rect x="14" y="10" width="1" height="1"/><rect x="14" y="12" width="1" height="1"/></g><path d="M0 13.5 H15" stroke="#5a5a5a" stroke-width="1"/></svg>
<svg class="r" style="left:622px;top:102px;" width="5" height="3" viewBox="0 0 5 3"><path d="M0 0 H5 L2.5 3 Z" fill="#666"/></svg>
<svg class="r" style="left:1233px;top:64px;" width="7" height="4" viewBox="0 0 7 4"><path d="M0 4 H7 L3.5 0 Z" fill="#c0c0c0"/></svg>
<svg class="r" style="left:1233px;top:86px;" width="7" height="4" viewBox="0 0 7 4"><path d="M0 0 H7 L3.5 4 Z" fill="#555"/></svg>
<svg class="r" style="left:1233px;top:102px;" width="7" height="7" viewBox="0 0 7 7"><path d="M0 0.5 H7" stroke="#555"/><path d="M0 3 H7 L3.5 7 Z" fill="#555"/></svg>
<svg class="r" style="left:1259px;top:57px;" width="15" height="13" viewBox="0 0 15 13"><g fill="#555"><rect x="1.5" y="0" width="3" height="3"/><rect x="10.5" y="0" width="3" height="3"/><rect x="0.5" y="3" width="5" height="4"/><rect x="9.5" y="3" width="5" height="4"/><rect x="0" y="6" width="6.5" height="7"/><rect x="8.5" y="6" width="6.5" height="7"/><rect x="5.5" y="4" width="4" height="4"/></g><rect x="1.5" y="8" width="1.2" height="4" fill="#ddd"/><rect x="10" y="8" width="1.2" height="4" fill="#ddd"/></svg>
<svg class="r" style="left:1311px;top:63px;" width="5" height="3" viewBox="0 0 5 3"><path d="M0 0 H5 L2.5 3 Z" fill="#666"/></svg>
<div id="t73" class="t" style="left:1258.50px;top:78.46px;font-size:9.50px;color:#555;font-family:'Liberation Sans', sans-serif;font-weight:bold;font-style:normal;transform:scaleX(1.0829);">a</div>
<div id="t74" class="t" style="left:1263.78px;top:78.46px;font-size:9.50px;color:#b5b5b5;font-family:'Liberation Sans', sans-serif;font-weight:bold;font-style:normal;transform:scaleX(1.1466);">b</div>
<div id="t75" class="t" style="left:1263.69px;top:85.13px;font-size:10.00px;color:#5f7fa6;font-family:'Liberation Sans', sans-serif;font-weight:bold;font-style:normal;transform:scaleX(1.0437);">ac</div>
<svg class="r" style="left:1259px;top:88px;" width="5" height="6" viewBox="0 0 5 6"><path d="M3.5 0 V4 H0.8 M2 2.8 L0.5 4 L2 5.2" fill="none" stroke="#5f7fa6" stroke-width="1"/></svg>
<svg class="r" style="left:1262px;top:101px;" width="11" height="16" viewBox="0 0 11 16"><path d="M1 1 L1 13 L4 10.3 L6.5 15 L8.3 14 L5.9 9.5 L10 9.2 Z" fill="#fff" stroke="#555" stroke-width="1.1" stroke-linejoin="round"/></svg>
<svg class="r" style="left:1312px;top:109px;" width="5" height="3" viewBox="0 0 5 3"><path d="M0 0 H5 L2.5 3 Z" fill="#666"/></svg>
<svg class="r" style="left:1347px;top:131px;" width="9" height="6" viewBox="0 0 9 6"><path d="M0.8 5.2 L4.5 1.5 L8.2 5.2" fill="none" stroke="#555" stroke-width="1.6"/></svg>
<svg class="r" style="left:0px;top:0px;pointer-events:none" width="1366" height="170" viewBox="0 0 1366 170"><rect x="283" y="153.5" width="1.5" height="1.5" fill="#555"/><text x="293.1" y="156.6" font-size="9.5" text-anchor="middle" fill="#3a3a3a" font-family="Liberation Sans">1</text><rect x="302" y="153.5" width="1.5" height="1.5" fill="#555"/><rect x="312" y="152" width="1" height="5" fill="#444"/><rect x="321" y="153.5" width="1.5" height="1.5" fill="#555"/><rect x="340" y="153.5" width="1.5" height="1.5" fill="#555"/><rect x="349" y="152" width="1" height="5" fill="#444"/><rect x="359" y="153.5" width="1.5" height="1.5" fill="#555"/><text x="368.9" y="156.6" font-size="9.5" text-anchor="middle" fill="#3a3a3a" font-family="Liberation Sans">1</text><rect x="378" y="153.5" width="1.5" height="1.5" fill="#555"/><rect x="387" y="152" width="1" height="5" fill="#444"/><rect x="397" y="153.5" width="1.5" height="1.5" fill="#555"/><text x="406.7" y="156.6" font-size="9.5" text-anchor="middle" fill="#3a3a3a" font-family="Liberation Sans">2</text><rect x="416" y="153.5" width="1.5" height="1.5" fill="#555"/><rect x="425" y="152" width="1" height="5" fill="#444"/><rect x="435" y="153.5" width="1.5" height="1.5" fill="#555"/><text x="444.6" y="156.6" font-size="9.5" text-anchor="middle" fill="#3a3a3a" font-family="Liberation Sans">3</text><rect x="454" y="153.5" width="1.5" height="1.5" fill="#555"/><rect x="463" y="152" width="1" height="5" fill="#444"/><rect x="472" y="153.5" width="1.5" height="1.5" fill="#555"/><text x="482.4" y="156.6" font-size="9.5" text-anchor="middle" fill="#3a3a3a" font-family="Liberation Sans">4</text><rect x="491" y="153.5" width="1.5" height="1.5" fill="#555"/><rect x="501" y="152" width="1" height="5" fill="#444"/><rect x="510" y="153.5" width="1.5" height="1.5" fill="#555"/><text x="520.2" y="156.6" font-size="9.5" text-anchor="middle" fill="#3a3a3a" font-family="Liberation Sans">5</text><rect x="529" y="153.5" width="1.5" height="1.5" fill="#555"/><rect x="539" y="152" width="1" height="5" fill="#444"/><rect x="548" y="153.5" width="1.5" height="1.5" fill="#555"/><text x="558.1" y="156.6" font-size="9.5" text-anchor="middle" fill="#3a3a3a" font-family="Liberation Sans">6</text><rect x="567" y="153.5" width="1.5" height="1.5" fill="#555"/><rect x="577" y="152" width="1" height="5" fill="#444"/><rect x="586" y="153.5" width="1.5" height="1.5" fill="#555"/><text x="596.0" y="156.6" font-size="9.5" text-anchor="middle" fill="#3a3a3a" font-family="Liberation Sans">7</text><rect x="605" y="153.5" width="1.5" height="1.5" fill="#555"/><rect x="614" y="152" width="1" height="5" fill="#444"/><rect x="624" y="153.5" width="1.5" height="1.5" fill="#555"/><text x="633.8" y="156.6" font-size="9.5" text-anchor="middle" fill="#3a3a3a" font-family="Liberation Sans">8</text><rect x="643" y="153.5" width="1.5" height="1.5" fill="#555"/><rect x="652" y="152" width="1" height="5" fill="#444"/><rect x="662" y="153.5" width="1.5" height="1.5" fill="#555"/><text x="671.7" y="156.6" font-size="9.5" text-anchor="middle" fill="#3a3a3a" font-family="Liberation Sans">9</text><rect x="681" y="153.5" width="1.5" height="1.5" fill="#555"/><rect x="690" y="152" width="1" height="5" fill="#444"/><rect x="700" y="153.5" width="1.5" height="1.5" fill="#555"/><text x="709.5" y="156.6" font-size="9.5" text-anchor="middle" fill="#3a3a3a" font-family="Liberation Sans">10</text><rect x="718" y="153.5" width="1.5" height="1.5" fill="#555"/><rect x="728" y="152" width="1" height="5" fill="#444"/><rect x="737" y="153.5" width="1.5" height="1.5" fill="#555"/><text x="747.4" y="156.6" font-size="9.5" text-anchor="middle" fill="#3a3a3a" font-family="Liberation Sans">11</text><rect x="756" y="153.5" width="1.5" height="1.5" fill="#555"/><rect x="766" y="152" width="1" height="5" fill="#444"/><rect x="775" y="153.5" width="1.5" height="1.5" fill="#555"/><text x="785.2" y="156.6" font-size="9.5" text-anchor="middle" fill="#3a3a3a" font-family="Liberation Sans">12</text><rect x="794" y="153.5" width="1.5" height="1.5" fill="#555"/><rect x="804" y="152" width="1" height="5" fill="#444"/><rect x="813" y="153.5" width="1.5" height="1.5" fill="#555"/><text x="823.0" y="156.6" font-size="9.5" text-anchor="middle" fill="#3a3a3a" font-family="Liberation Sans">13</text><rect x="832" y="153.5" width="1.5" height="1.5" fill="#555"/><rect x="841" y="152" width="1" height="5" fill="#444"/><rect x="851" y="153.5" width="1.5" height="1.5" fill="#555"/><text x="860.9" y="156.6" font-size="9.5" text-anchor="middle" fill="#3a3a3a" font-family="Liberation Sans">14</text><rect x="870" y="153.5" width="1.5" height="1.5" fill="#555"/><rect x="879" y="152" width="1" height="5" fill="#444"/><rect x="889" y="153.5" width="1.5" height="1.5" fill="#555"/><text x="898.8" y="156.6" font-size="9.5" text-anchor="middle" fill="#3a3a3a" font-family="Liberation Sans">15</text><rect x="908" y="153.5" width="1.5" height="1.5" fill="#555"/><rect x="917" y="152" width="1" height="5" fill="#444"/><rect x="927" y="153.5" width="1.5" height="1.5" fill="#555"/><text x="936.6" y="156.6" font-size="9.5" text-anchor="middle" fill="#3a3a3a" font-family="Liberation Sans">16</text><rect x="946" y="153.5" width="1.5" height="1.5" fill="#555"/><rect x="955" y="152" width="1" height="5" fill="#444"/><rect x="964" y="153.5" width="1.5" height="1.5" fill="#555"/><text x="974.5" y="156.6" font-size="9.5" text-anchor="middle" fill="#3a3a3a" font-family="Liberation Sans">17</text><rect x="983" y="153.5" width="1.5" height="1.5" fill="#555"/><rect x="993" y="152" width="1" height="5" fill="#444"/><rect x="1002" y="153.5" width="1.5" height="1.5" fill="#555"/><text x="1012.3" y="156.6" font-size="9.5" text-anchor="middle" fill="#3a3a3a" font-family="Liberation Sans">18</text><rect x="1021" y="153.5" width="1.5" height="1.5" fill="#555"/><rect x="1031" y="152" width="1" height="5" fill="#444"/><rect x="1040" y="153.5" width="1.5" height="1.5" fill="#555"/><text x="1050.2" y="156.6" font-size="9.5" text-anchor="middle" fill="#3a3a3a" font-family="Liberation Sans">19</text><rect x="1059" y="153.5" width="1.5" height="1.5" fill="#555"/><rect x="1069" y="152" width="1" height="5" fill="#444"/><rect x="1078" y="153.5" width="1.5" height="1.5" fill="#555"/><text x="1088.0" y="156.6" font-size="9.5" text-anchor="middle" fill="#3a3a3a" font-family="Liberation Sans">20</text></svg>
<svg class="r" style="left:302px;top:144px;" width="11" height="24" viewBox="0 0 11 24"><path d="M0.5 0.5 H9.5 L5 6.5 Z" fill="#fff" stroke="#8a8a8a"/><path d="M5 7 L0.5 13 V14.5 H9.5 V13 Z" fill="#fff" stroke="#8a8a8a"/><rect x="0.5" y="15.5" width="9" height="6.5" fill="#fff" stroke="#8a8a8a"/></svg>
<svg class="r" style="left:992px;top:152px;" width="11" height="9" viewBox="0 0 11 9"><path d="M0.5 8.5 V5 L5 0.8 L9.5 5 V8.5 Z" fill="#fff" stroke="#8a8a8a"/></svg>
<svg class="r" style="left:5px;top:147px;" width="12" height="12" viewBox="0 0 12 12"><path d="M5 5 V10 H10.5" fill="none" stroke="#555" stroke-width="2"/></svg>
<svg class="r" style="left:0px;top:0px;pointer-events:none" width="30" height="706" viewBox="0 0 30 706"><rect x="10" y="211" width="1.5" height="1.5" fill="#555"/><rect x="8.5" y="220" width="5" height="1" fill="#444"/><rect x="10" y="230" width="1.5" height="1.5" fill="#555"/><text x="0" y="0" font-size="9.5" text-anchor="middle" fill="#3a3a3a" font-family="Liberation Sans" transform="translate(14.2 239.8) rotate(-90)">1</text><rect x="10" y="249" width="1.5" height="1.5" fill="#555"/><rect x="8.5" y="258" width="5" height="1" fill="#444"/><rect x="10" y="268" width="1.5" height="1.5" fill="#555"/><text x="0" y="0" font-size="9.5" text-anchor="middle" fill="#3a3a3a" font-family="Liberation Sans" transform="translate(14.2 277.7) rotate(-90)">2</text><rect x="10" y="287" width="1.5" height="1.5" fill="#555"/><rect x="8.5" y="296" width="5" height="1" fill="#444"/><rect x="10" y="306" width="1.5" height="1.5" fill="#555"/><text x="0" y="0" font-size="9.5" text-anchor="middle" fill="#3a3a3a" font-family="Liberation Sans" transform="translate(14.2 315.6) rotate(-90)">3</text><rect x="10" y="325" width="1.5" height="1.5" fill="#555"/><rect x="8.5" y="334" width="5" height="1" fill="#444"/><rect x="10" y="343" width="1.5" height="1.5" fill="#555"/><text x="0" y="0" font-size="9.5" text-anchor="middle" fill="#3a3a3a" font-family="Liberation Sans" transform="translate(14.2 353.4) rotate(-90)">4</text><rect x="10" y="362" width="1.5" height="1.5" fill="#555"/><rect x="8.5" y="372" width="5" height="1" fill="#444"/><rect x="10" y="381" width="1.5" height="1.5" fill="#555"/><text x="0" y="0" font-size="9.5" text-anchor="middle" fill="#3a3a3a" font-family="Liberation Sans" transform="translate(14.2 391.2) rotate(-90)">5</text><rect x="10" y="400" width="1.5" height="1.5" fill="#555"/><rect x="8.5" y="410" width="5" height="1" fill="#444"/><rect x="10" y="419" width="1.5" height="1.5" fill="#555"/><text x="0" y="0" font-size="9.5" text-anchor="middle" fill="#3a3a3a" font-family="Liberation Sans" transform="translate(14.2 429.1) rotate(-90)">6</text><rect x="10" y="438" width="1.5" height="1.5" fill="#555"/><rect x="8.5" y="448" width="5" height="1" fill="#444"/><rect x="10" y="457" width="1.5" height="1.5" fill="#555"/><text x="0" y="0" font-size="9.5" text-anchor="middle" fill="#3a3a3a" font-family="Liberation Sans" transform="translate(14.2 466.9) rotate(-90)">7</text><rect x="10" y="476" width="1.5" height="1.5" fill="#555"/><rect x="8.5" y="485" width="5" height="1" fill="#444"/><rect x="10" y="495" width="1.5" height="1.5" fill="#555"/><text x="0" y="0" font-size="9.5" text-anchor="middle" fill="#3a3a3a" font-family="Liberation Sans" transform="translate(14.2 504.8) rotate(-90)">8</text><rect x="10" y="514" width="1.5" height="1.5" fill="#555"/><rect x="8.5" y="523" width="5" height="1" fill="#444"/><rect x="10" y="533" width="1.5" height="1.5" fill="#555"/><text x="0" y="0" font-size="9.5" text-anchor="middle" fill="#3a3a3a" font-family="Liberation Sans" transform="translate(14.2 542.7) rotate(-90)">9</text><rect x="10" y="552" width="1.5" height="1.5" fill="#555"/><rect x="8.5" y="561" width="5" height="1" fill="#444"/><rect x="10" y="571" width="1.5" height="1.5" fill="#555"/><text x="0" y="0" font-size="9.5" text-anchor="middle" fill="#3a3a3a" font-family="Liberation Sans" transform="translate(14.2 580.5) rotate(-90)">10</text><rect x="10" y="589" width="1.5" height="1.5" fill="#555"/><rect x="8.5" y="599" width="5" height="1" fill="#444"/><rect x="10" y="608" width="1.5" height="1.5" fill="#555"/><text x="0" y="0" font-size="9.5" text-anchor="middle" fill="#3a3a3a" font-family="Liberation Sans" transform="translate(14.2 618.4) rotate(-90)">11</text><rect x="10" y="627" width="1.5" height="1.5" fill="#555"/><rect x="8.5" y="637" width="5" height="1" fill="#444"/><rect x="10" y="646" width="1.5" height="1.5" fill="#555"/><text x="0" y="0" font-size="9.5" text-anchor="middle" fill="#3a3a3a" font-family="Liberation Sans" transform="translate(14.2 656.2) rotate(-90)">12</text><rect x="10" y="665" width="1.5" height="1.5" fill="#555"/><rect x="8.5" y="675" width="5" height="1" fill="#444"/><rect x="10" y="684" width="1.5" height="1.5" fill="#555"/><text x="0" y="0" font-size="9.5" text-anchor="middle" fill="#3a3a3a" font-family="Liberation Sans" transform="translate(14.2 694.0) rotate(-90)">13</text><rect x="10" y="703" width="1.5" height="1.5" fill="#555"/></svg>
<div class="r" style="left:0px;top:706px;width:1366px;height:22px;background:#333333;border-top:1px solid #222;border-bottom:1px solid #1e1414"></div>
<div id="t76" class="t" style="left:6.74px;top:711.08px;font-size:11.60px;color:#fafafa;font-family:'Liberation Sans', sans-serif;font-weight:normal;font-style:normal;transform:scaleX(0.9054);">PAGE 1 OF 2</div>
<div id="t77" class="t" style="left:87.67px;top:711.08px;font-size:11.60px;color:#fafafa;font-family:'Liberation Sans', sans-serif;font-weight:normal;font-style:normal;transform:scaleX(0.9375);">158 WORDS</div>
<div id="t78" class="t" style="left:201.89px;top:711.08px;font-size:11.60px;color:#fafafa;font-family:'Liberation Sans', sans-serif;font-weight:normal;font-style:normal;transform:scaleX(0.8518);">ENGLISH (UNITED STATES)</div>
<div id="t79" class="t" style="left:1328.76px;top:711.08px;font-size:11.60px;color:#fafafa;font-family:'Liberation Sans', sans-serif;font-weight:normal;font-style:normal;transform:scaleX(0.9521);">100%</div>
<svg class="r" style="left:171px;top:710px;" width="15" height="14" viewBox="0 0 15 14"><path d="M0.5 1.5 C2 0.5 4 0.5 5.5 1.5 V12.5 C4 11.5 2 11.5 0.5 12.5 Z" fill="none" stroke="#f0f0f0"/><path d="M5.5 1.5 C6.5 0.7 7.5 0.5 8.5 0.7 M5.5 12.5 C6.5 11.7 7.5 11.5 8.5 11.7 M8.5 0.7 V2.5 M8.5 9.5 V11.7" fill="none" stroke="#f0f0f0"/><path d="M4.5 13.5 L5.5 12.5 L6.5 13.5" fill="none" stroke="#f0f0f0" stroke-width=".8"/><path d="M9.5 4 L13.5 8.5 M13.5 4 L9.5 8.5" stroke="#f0f0f0" stroke-width="1.3"/></svg>
<svg class="r" style="left:350px;top:710px;" width="15" height="13" viewBox="0 0 15 13"><circle cx="3.5" cy="3.5" r="3.2" fill="#f0f0f0"/><rect x="2" y="4" width="12.5" height="9" fill="#f0f0f0"/><g fill="#2d2d2d"><rect x="4" y="7" width="2" height="1.5"/><rect x="7.5" y="7" width="2" height="1.5"/><rect x="11" y="7" width="2" height="1.5"/><rect x="4" y="10" width="2" height="1.5"/><rect x="7.5" y="10" width="2" height="1.5"/><rect x="11" y="10" width="2" height="1.5"/></g></svg>
<svg class="r" style="left:1085px;top:710px;" width="14" height="14" viewBox="0 0 14 14"><path d="M0.5 0.5 H5.5 C6.3 0.5 6.8 1 7 1.5 C7.2 1 7.7 0.5 8.5 0.5 H13.5 V12 H8.5 C7.7 12 7.2 12.5 7 13 C6.8 12.5 6.3 12 5.5 12 H0.5 Z M7 1.5 V13" fill="none" stroke="#f0f0f0"/><path d="M2 3.5 H5.5 M2 6 H5.5 M2 8.5 H5.5 M8.5 3.5 H12 M8.5 6 H12 M8.5 8.5 H12" stroke="#f0f0f0"/></svg>
<div class="r" style="left:1112px;top:706px;width:38px;height:22px;background:#000;"></div>
<svg class="r" style="left:1124px;top:710px;" width="14" height="13" viewBox="0 0 14 13"><rect x="0.5" y="0.5" width="13" height="12" fill="none" stroke="#f0f0f0"/><path d="M2.5 3 H11.5 M2.5 5.2 H11.5 M2.5 7.4 H11.5 M2.5 9.6 H11.5" stroke="#f0f0f0"/></svg>
<svg class="r" style="left:1161px;top:710px;" width="16" height="14" viewBox="0 0 16 14"><path d="M0.5 0.5 H10.5 V6 M0.5 0.5 V12.5 H7" fill="none" stroke="#f0f0f0"/><path d="M2.5 3 H8.5 M2.5 5.2 H7.5 M2.5 7.4 H6 M2.5 9.6 H6" stroke="#f0f0f0"/><circle cx="11" cy="9.5" r="4.2" fill="#f0f0f0"/><path d="M9 7 C10 8 9.5 9 10.5 10 C11.5 11 12 12 11.5 13.5 M12 6 C12.5 7.5 14 8 15 8.5" fill="none" stroke="#2d2d2d" stroke-width="1.1"/></svg>
<div class="r" style="left:1193px;top:716px;width:6px;height:2px;background:#f0f0f0;"></div>
<div class="r" style="left:1203px;top:716.5px;width:100px;height:1px;background:#f0f0f0;"></div>
<div class="r" style="left:1251px;top:711px;width:5px;height:11px;background:#f0f0f0;"></div>
<div class="r" style="left:1307px;top:716px;width:9px;height:2px;background:#f0f0f0;"></div>
<div class="r" style="left:1310.5px;top:712px;width:2px;height:10px;background:#f0f0f0;"></div>
<div class="r" style="left:0px;top:728px;width:1366px;height:40px;background:radial-gradient(ellipse 135px 34px at 752px 0px, rgba(222,98,98,1) 0%, rgba(214,90,90,.95) 55%, rgba(214,90,90,0) 100%),
radial-gradient(ellipse 230px 22px at 745px 44px, rgba(115,18,26,.9), rgba(115,18,26,0) 100%),
radial-gradient(ellipse 70px 26px at 605px 2px, rgba(120,18,22,.95), rgba(120,18,22,0) 100%),
linear-gradient(90deg,#8a2a36 0%,#9a3a46 8%,#a03f4a 30%,#9c3d47 40%,#8a2a33 44%,#84202a 62%,#84202a 72%,#8c2a33 82%,#8f2d36 92%,#96353e 100%);"></div>
<div class="r" style="left:0px;top:728px;width:1366px;height:1px;background:rgba(240,195,200,.75);"></div>
<div class="r" style="left:122px;top:729px;width:58px;height:38px;background:linear-gradient(rgba(255,230,230,.35), rgba(255,200,200,.18) 45%, rgba(255,200,200,.10));border:1px solid rgba(255,200,200,.45);border-radius:3px;box-shadow:inset 0 0 0 1px rgba(120,20,30,.25)"></div>
<div class="r" style="left:245px;top:729px;width:55px;height:38px;background:linear-gradient(rgba(255,230,230,.35), rgba(255,200,200,.18) 45%, rgba(255,200,200,.10));border:1px solid rgba(255,200,200,.45);border-radius:3px;box-shadow:inset 0 0 0 1px rgba(120,20,30,.25)"></div>
<div class="r" style="left:308px;top:729px;width:59px;height:38px;background:linear-gradient(rgba(255,230,230,.35), rgba(255,200,200,.18) 45%, rgba(255,200,200,.10));border:1px solid rgba(255,200,200,.45);border-radius:3px;box-shadow:inset 0 0 0 1px rgba(120,20,30,.25)"></div>
<div class="r" style="left:370px;top:729px;width:58px;height:38px;background:linear-gradient(rgba(255,230,230,.35), rgba(255,200,200,.18) 45%, rgba(255,200,200,.10));border:1px solid rgba(255,200,200,.45);border-radius:3px;box-shadow:inset 0 0 0 1px rgba(120,20,30,.25)"></div>
<div class="r" style="left:432px;top:729px;width:58px;height:38px;background:linear-gradient(rgba(255,230,230,.35), rgba(255,225,225,.38) 45%, rgba(255,200,200,.10));border:1px solid rgba(255,200,200,.45);border-radius:3px;box-shadow:inset 0 0 0 1px rgba(120,20,30,.25)"></div>
<div class="r" style="left:302px;top:730px;width:2px;height:36px;background:rgba(255,190,190,.35);"></div>
<svg class="r" style="left:8px;top:729px;" width="38" height="38" viewBox="0 0 38 38"><defs><linearGradient id="orbt" x1="0" y1="0" x2="0" y2="1"><stop offset="0" stop-color="#d5e3ea"/><stop offset=".5" stop-color="#6f9cb8"/><stop offset=".5" stop-color="#0d3f78"/><stop offset=".8" stop-color="#1579b8"/><stop offset="1" stop-color="#3cd0f0"/></linearGradient></defs>
<circle cx="19" cy="19" r="18" fill="url(#orbt)" stroke="#c9b4bc" stroke-width="1"/>
<path d="M10 10 C13 8.5 15.5 8.5 18.5 10.5 L17.3 19 C14.5 17.3 12 17.3 8.6 18.8 Z" fill="#f26a22"/>
<path d="M19.8 11 C23 13 26 13 29.5 11.2 L28.3 19.8 C25 21.5 22 21.5 18.6 19.5 Z" fill="#8cc63f"/>
<path d="M8.4 20.2 C11.5 18.8 14.5 18.8 17.1 20.5 L16 29 C13 27.3 10.3 27.3 7.2 28.8 Z" fill="#35a8e8"/>
<path d="M18.4 20.9 C22 22.8 25 22.8 28.1 21.2 L26.9 29.8 C23.5 31.5 20.5 31.5 17.3 29.5 Z" fill="#fcc419"/>
<ellipse cx="19" cy="32" rx="11" ry="4" fill="#5ff0ff" opacity=".35"/></svg>
<svg class="r" style="left:74px;top:732px;" width="31" height="32" viewBox="0 0 31 32"><defs><radialGradient id="ffo" cx="70%" cy="20%" r="90%"><stop offset="0" stop-color="#fff44f"/><stop offset=".35" stop-color="#ffbd2e"/><stop offset=".65" stop-color="#ff5a26"/><stop offset="1" stop-color="#e31587"/></radialGradient></defs>
<path d="M26 4 C30 8 31 13 30.5 17 C30 25 23.5 31 15.5 31 C7.5 31 1 24.5 1 16.5 C1 12 3 8 6 5.5 C6 8 7 10 8.5 11 C10 7 13 4.5 17 4 C21 4 24.5 6 26 4 Z" fill="url(#ffo)"/>
<circle cx="17" cy="14.5" r="7.5" fill="#3a6fe0"/><path d="M9 10 C12 8 15 9 15 12 C12 12 11 14 12 16 C14 20 20 21 23 18 C22 23 16 25 12 23 C8 21 7 15 9 10 Z" fill="#ff6a1a"/>
<path d="M24 3 C29 8 30 15 28 20 C27 14 25 10 21 8 Z" fill="#ffd93a"/></svg>
<svg class="r" style="left:134px;top:735px;" width="34" height="29" viewBox="0 0 34 29"><rect x="2" y="1" width="9" height="6" fill="#fdf3c8" stroke="#e8c060" stroke-width=".6"/><rect x="3" y="1.5" width="3" height="2.5" fill="#2fa844"/>
<rect x="9" y="3.5" width="11" height="6" fill="#fdf3c8" stroke="#e8c060" stroke-width=".6"/><rect x="12" y="4" width="3" height="2.5" fill="#d83a2a"/>
<rect x="18" y="5.5" width="13" height="6" fill="#fdf3c8" stroke="#e8c060" stroke-width=".6"/><rect x="21" y="6.5" width="3" height="2.5" fill="#2c8ad8"/>
<rect x="1" y="9" width="31" height="19" fill="#f7df90" stroke="#e2b850" stroke-width=".8"/>
<path d="M5 29 V17.5 H29 V29 H24 V23 H10 V29 Z" fill="#86c4ee" stroke="#4a90cc" stroke-width="1"/></svg>
<svg class="r" style="left:199px;top:733px;" width="28" height="30" viewBox="0 0 28 30"><path d="M11.5 1.5 C12.5 0.5 15.5 0.5 16.5 1.5 L23 22 H5 Z" fill="#f5901a"/><path d="M9.8 7.5 C12 8.8 16 8.8 18.2 7.5 L19.6 12 C16.5 13.5 11.5 13.5 8.4 12 Z" fill="#f2f2f2"/><path d="M7.5 15 C11 16.8 17 16.8 20.5 15 L22 20 C17.5 22 10.5 22 6 20 Z" fill="#ececec"/><path d="M1 22 H27 L26 28 H2 Z" fill="#f5901a"/><path d="M2 26.5 H26 L26 28 H2 Z" fill="#d06a08"/></svg>
<svg class="r" style="left:257px;top:732px;" width="30" height="30" viewBox="0 0 30 30"><circle cx="15" cy="15" r="14.5" fill="#db4437"/><path d="M15 15 L2.4 22.3 A14.5 14.5 0 0 0 22.2 27.6 Z" fill="#0f9d58"/><path d="M15 15 L22.2 27.6 A14.5 14.5 0 0 0 29.5 15 L28 8 Z" fill="#f4c20d"/><path d="M15 15 L28 8 A14.5 14.5 0 0 1 29.5 15 Z" fill="#f4c20d"/><circle cx="15" cy="15" r="6.6" fill="#fff"/><circle cx="15" cy="15" r="5.2" fill="#4285f4"/></svg>
<svg class="r" style="left:322px;top:733px;" width="31" height="31" viewBox="0 0 31 31"><defs><linearGradient id="npg" x1="0" y1="0" x2="0" y2="1"><stop offset="0" stop-color="#fafafa"/><stop offset=".5" stop-color="#d8f0b0"/><stop offset="1" stop-color="#3cbf2a"/></linearGradient></defs>
<rect x="1" y="2" width="22" height="28" fill="url(#npg)" stroke="#777" stroke-width="1"/><path d="M3 6 H21 M3 9 H21 M3 12 H21" stroke="#9ab" stroke-width=".6"/>
<path d="M6 23 V14 C6 12 9 12 9 14 V23" fill="none" stroke="#222" stroke-width="1.3"/><text x="10" y="20" font-size="7" font-weight="bold" fill="#222" font-family="Liberation Sans">++</text>
<path d="M13 26 L27 5 L30 7 L16 28 Z" fill="#f2c230" stroke="#8a6a10" stroke-width=".6"/><circle cx="29" cy="4" r="1.6" fill="#c33"/></svg>
<svg class="r" style="left:383px;top:732px;" width="31" height="29" viewBox="0 0 31 29"><defs><linearGradient id="psg" x1="0" y1="0" x2="0" y2="1"><stop offset="0" stop-color="#3aa0e8"/><stop offset="1" stop-color="#0a3f8a"/></linearGradient></defs>
<path d="M2 3 L27 1 L30 26 L4 28 Z" fill="#05234d"/><rect x="2" y="1" width="26" height="25" rx="1" fill="url(#psg)"/><text x="5.5" y="19" font-size="15" font-weight="bold" fill="#9ad3ff" font-family="Liberation Sans">Ps</text></svg>
<svg class="r" style="left:445px;top:733px;" width="32" height="31" viewBox="0 0 32 31"><path d="M1 4 L19 1 V30 L1 27 Z" fill="#2b579a"/><rect x="18" y="5" width="12" height="21" fill="#fff" stroke="#2b579a" stroke-width="1.5"/><path d="M19 9 H28 M19 12 H28 M19 15 H28 M19 18 H28 M19 21 H28" stroke="#2b579a" stroke-width="1.2"/>
<path d="M3.5 10 L6 21 L9 13 L12 21 L14.5 10" fill="none" stroke="#fff" stroke-width="2.2"/></svg>
<div id="t80" class="t" style="left:1171.55px;top:739.59px;font-size:12.30px;color:#fff;font-family:'Liberation Sans', sans-serif;font-weight:normal;font-style:normal;transform:scaleX(0.9415);">EN</div>
<svg class="r" style="left:1203px;top:747px;" width="9" height="5" viewBox="0 0 9 5"><path d="M0 5 H9 L4.5 0 Z" fill="#fff"/></svg>
<svg class="r" style="left:1224px;top:741px;" width="16" height="16" viewBox="0 0 16 16"><path d="M1 1 V15" stroke="#fff" stroke-width="1.6"/><path d="M2 1.5 C5 0.5 7 3 10 2 V9 C7 10 5 7.5 2 8.5 Z" fill="#f2f2f2"/><path d="M10 3 H14 V8 H10 Z" fill="#ddd"/><circle cx="12" cy="12" r="3.6" fill="#e84a4a"/><path d="M10.3 10.3 L13.7 13.7 M13.7 10.3 L10.3 13.7" stroke="#fff" stroke-width="1.3"/></svg>
<svg class="r" style="left:1248px;top:743px;" width="16" height="12" viewBox="0 0 16 12"><rect x="0" y="9" width="2.5" height="2.5" fill="#fff"/><rect x="3.5" y="7" width="2.5" height="4.5" fill="#fff"/><rect x="7" y="5" width="2.5" height="6.5" fill="rgba(255,255,255,.35)"/><rect x="10.5" y="2.5" width="2.5" height="9" fill="rgba(255,255,255,.35)"/><rect x="13.5" y="0" width="2.5" height="11.5" fill="rgba(255,255,255,.35)"/></svg>
<div id="t81" class="t" style="left:1296.90px;top:734.59px;font-size:12.30px;color:#fff;font-family:'Liberation Sans', sans-serif;font-weight:normal;font-style:normal;transform:scaleX(0.9557);">11:11</div>
<div id="t82" class="t" style="left:1281.54px;top:751.59px;font-size:12.30px;color:#fff;font-family:'Liberation Sans', sans-serif;font-weight:normal;font-style:normal;transform:scaleX(0.9556);">02/06/2019</div>
<div class="r" style="left:1352px;top:729px;width:14px;height:38px;background:linear-gradient(90deg, rgba(255,200,200,.25), rgba(255,220,220,.4));border:1px solid rgba(255,200,200,.5);border-right:none"></div>
<svg class="r" style="left:1353px;top:150px;" width="9" height="6" viewBox="0 0 9 6"><path d="M0 5 H9 L4.5 0.5 Z" fill="#666"/></svg>
<svg class="r" style="left:1353px;top:695px;" width="9" height="6" viewBox="0 0 9 6"><path d="M0 0.5 H9 L4.5 5 Z" fill="#666"/></svg></body></html>
